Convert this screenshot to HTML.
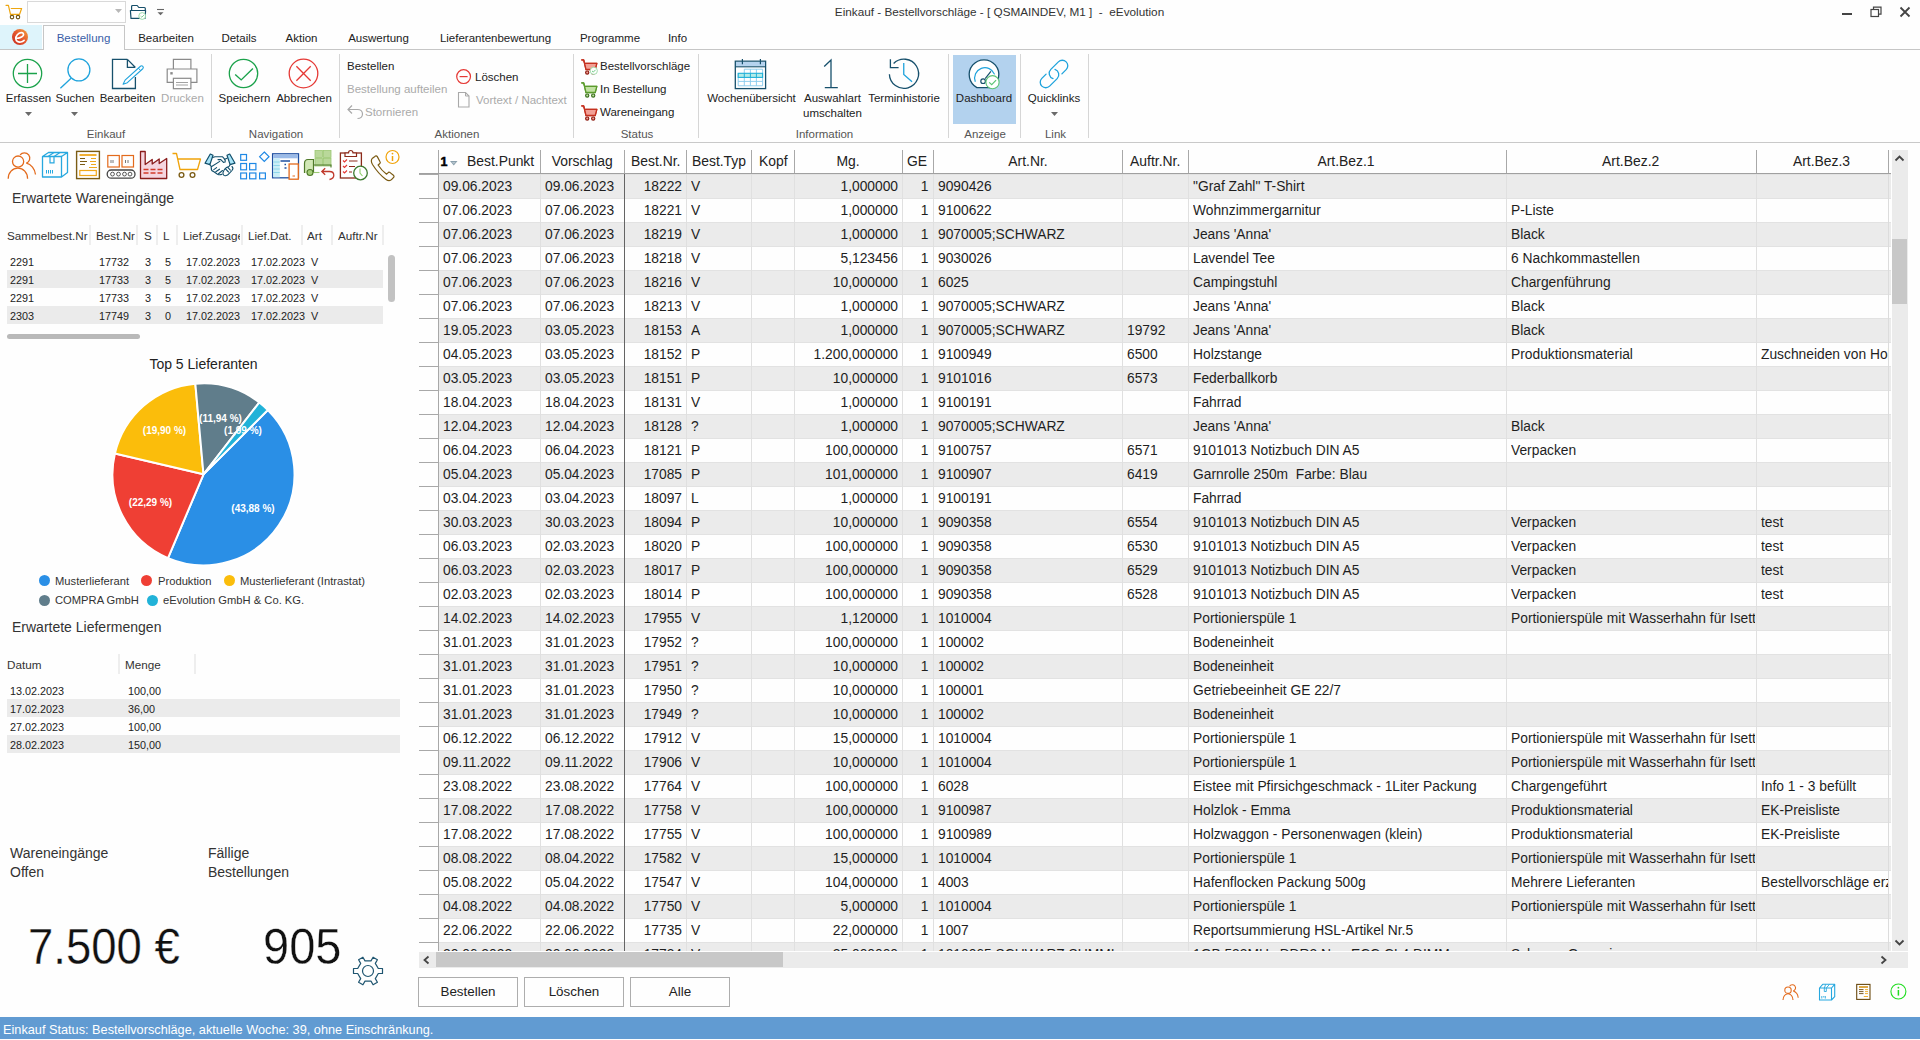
<!DOCTYPE html><html><head><meta charset="utf-8"><style>
html,body{margin:0;padding:0;width:1920px;height:1040px;overflow:hidden;background:#fefefe;font-family:"Liberation Sans", sans-serif;}
.t{position:absolute;white-space:nowrap;}
.r{position:absolute;}
</style></head><body>
<svg class="r" style="left:0px;top:0px;" width="26" height="22" viewBox="0 0 26 22"><path d="M6 5.3h2.4l2.1 9h9.1l2-5.8H11.3" fill="none" stroke="#eea60f" stroke-width="1.2" stroke-linejoin="round" stroke-linecap="round"/><circle cx="12" cy="17.1" r="1.75" fill="none" stroke="#6e5210" stroke-width="1.1"/><circle cx="18" cy="17.1" r="1.75" fill="none" stroke="#6e5210" stroke-width="1.1"/></svg>
<div class="r" style="left:27px;top:1px;width:99px;height:22px;background:#fff;border:1px solid #d9d9d9;box-sizing:border-box;"></div>
<svg class="r" style="left:115px;top:9px;" width="8" height="5" viewBox="0 0 8 5"><path d="M0 0h7l-3.5 4z" fill="#b8b8b8"/></svg>
<svg class="r" style="left:129px;top:3px;" width="20" height="20" viewBox="0 0 20 20"><path d="M2.6 7.3V3.5c0-.6.4-1 1-1h4.6l1.6 2h5.6c.5 0 .9.4.9.9v2" fill="none" stroke="#164f6a" stroke-width="1.2" stroke-linejoin="round"/><path d="M1.4 7.5h15.2l-.6 7.9H2z" fill="#fff" stroke="#164f6a" stroke-width="1.2" stroke-linejoin="round"/><circle cx="13.2" cy="13" r="3.4" fill="#fff" stroke="#8fd6a0" stroke-width="0.9"/><path d="M11.6 13.1l1.2 1.1 2.1-2.1" fill="none" stroke="#6fcb85" stroke-width="0.9"/></svg>
<svg class="r" style="left:156px;top:8px;" width="10" height="9" viewBox="0 0 10 9"><path d="M1 1.5h7" stroke="#666" stroke-width="1.1"/><path d="M1.5 4.3h6l-3 3z" fill="#666"/></svg>
<div class="t" style="top:4.0px;font-size:11.75px;line-height:16px;color:#333;left:699.5px;width:600px;text-align:center;white-space:pre;">Einkauf - Bestellvorschläge - [ QSMAINDEV, M1 ]  -  eEvolution</div>
<div class="r" style="left:1842px;top:13px;width:10px;height:2px;background:#444;"></div>
<svg class="r" style="left:1870px;top:6px;" width="12" height="12" viewBox="0 0 12 12"><rect x="1" y="3.5" width="7.5" height="7" fill="#fff" stroke="#444" stroke-width="1.2"/><path d="M3.5 3.5V1.2h7.5v7h-2.3" fill="none" stroke="#444" stroke-width="1.2"/></svg>
<svg class="r" style="left:1899px;top:6px;" width="12" height="12" viewBox="0 0 12 12"><path d="M1.5 1.5l9 9M10.5 1.5l-9 9" stroke="#444" stroke-width="1.8"/></svg>
<div class="r" style="left:0px;top:25px;width:42px;height:25px;background:#def4fb;"></div>
<svg class="r" style="left:11px;top:28px;" width="18" height="18" viewBox="0 0 18 18"><defs><linearGradient id="lg" x1="1" y1="0" x2="0" y2="1"><stop offset="0" stop-color="#f5a03a"/><stop offset="0.5" stop-color="#e4572e"/><stop offset="1" stop-color="#c62a1c"/></linearGradient></defs><circle cx="9" cy="9" r="8" fill="url(#lg)"/><path d="M4.8 10.2c2.5.3 6.5-.8 7.5-2.8.8-1.7-.5-3-2.2-2.8-2.8.3-5.5 3.3-5.3 6.2.2 2.6 2.6 3.6 5 3.2 1.3-.2 2.4-.8 3.3-1.6" fill="none" stroke="#fff" stroke-width="1.7" stroke-linecap="round"/></svg>
<div class="r" style="left:0px;top:49px;width:1920px;height:1px;background:#c6c6c6;"></div>
<div class="r" style="left:43px;top:25px;width:82px;height:25px;background:#fefefe;border:1px solid #c6c6c6;border-bottom:none;box-sizing:border-box;height:25px;"></div>
<div class="t" style="top:30.0px;font-size:11.5px;line-height:16px;color:#3a5fa8;left:-216.5px;width:600px;text-align:center;">Bestellung</div>
<div class="t" style="top:30.0px;font-size:11.5px;line-height:16px;color:#222;left:-134px;width:600px;text-align:center;">Bearbeiten</div>
<div class="t" style="top:30.0px;font-size:11.5px;line-height:16px;color:#222;left:-61px;width:600px;text-align:center;">Details</div>
<div class="t" style="top:30.0px;font-size:11.5px;line-height:16px;color:#222;left:1.5px;width:600px;text-align:center;">Aktion</div>
<div class="t" style="top:30.0px;font-size:11.5px;line-height:16px;color:#222;left:78.5px;width:600px;text-align:center;">Auswertung</div>
<div class="t" style="top:30.0px;font-size:11.5px;line-height:16px;color:#222;left:195.5px;width:600px;text-align:center;">Lieferantenbewertung</div>
<div class="t" style="top:30.0px;font-size:11.5px;line-height:16px;color:#222;left:310px;width:600px;text-align:center;">Programme</div>
<div class="t" style="top:30.0px;font-size:11.5px;line-height:16px;color:#222;left:377.5px;width:600px;text-align:center;">Info</div>
<div class="r" style="left:0px;top:142px;width:1920px;height:1px;background:#c9c9c9;"></div>
<div class="r" style="left:211px;top:54px;width:1px;height:84px;background:#d6d6d6;"></div>
<div class="r" style="left:339px;top:54px;width:1px;height:84px;background:#d6d6d6;"></div>
<div class="r" style="left:573px;top:54px;width:1px;height:84px;background:#d6d6d6;"></div>
<div class="r" style="left:698px;top:54px;width:1px;height:84px;background:#d6d6d6;"></div>
<div class="r" style="left:948px;top:54px;width:1px;height:84px;background:#d6d6d6;"></div>
<div class="r" style="left:1020px;top:54px;width:1px;height:84px;background:#d6d6d6;"></div>
<div class="r" style="left:1088px;top:54px;width:1px;height:84px;background:#d6d6d6;"></div>
<div class="t" style="top:126.0px;font-size:11.5px;line-height:16px;color:#555;left:-194px;width:600px;text-align:center;">Einkauf</div>
<div class="t" style="top:126.0px;font-size:11.5px;line-height:16px;color:#555;left:-24px;width:600px;text-align:center;">Navigation</div>
<div class="t" style="top:126.0px;font-size:11.5px;line-height:16px;color:#555;left:157px;width:600px;text-align:center;">Aktionen</div>
<div class="t" style="top:126.0px;font-size:11.5px;line-height:16px;color:#555;left:337px;width:600px;text-align:center;">Status</div>
<div class="t" style="top:126.0px;font-size:11.5px;line-height:16px;color:#555;left:524.5px;width:600px;text-align:center;">Information</div>
<div class="t" style="top:126.0px;font-size:11.5px;line-height:16px;color:#555;left:685px;width:600px;text-align:center;">Anzeige</div>
<div class="t" style="top:126.0px;font-size:11.5px;line-height:16px;color:#555;left:755.5px;width:600px;text-align:center;">Link</div>
<div class="r" style="left:953px;top:55px;width:63px;height:69px;background:#b3d2ee;"></div>
<div class="t" style="top:90.0px;font-size:11.5px;line-height:16px;color:#222;left:-271.5px;width:600px;text-align:center;">Erfassen</div>
<div class="t" style="top:90.0px;font-size:11.5px;line-height:16px;color:#222;left:-225px;width:600px;text-align:center;">Suchen</div>
<div class="t" style="top:90.0px;font-size:11.5px;line-height:16px;color:#222;left:-172.5px;width:600px;text-align:center;">Bearbeiten</div>
<div class="t" style="top:90.0px;font-size:11.5px;line-height:16px;color:#aaa;left:-117.5px;width:600px;text-align:center;">Drucken</div>
<div class="t" style="top:90.0px;font-size:11.5px;line-height:16px;color:#222;left:-55.5px;width:600px;text-align:center;">Speichern</div>
<div class="t" style="top:90.0px;font-size:11.5px;line-height:16px;color:#222;left:4px;width:600px;text-align:center;">Abbrechen</div>
<div class="t" style="top:90.0px;font-size:11.5px;line-height:16px;color:#222;left:451.5px;width:600px;text-align:center;">Wochenübersicht</div>
<div class="t" style="top:90.0px;font-size:11.5px;line-height:16px;color:#222;left:532.5px;width:600px;text-align:center;">Auswahlart</div>
<div class="t" style="top:90.0px;font-size:11.5px;line-height:16px;color:#222;left:604px;width:600px;text-align:center;">Terminhistorie</div>
<div class="t" style="top:90.0px;font-size:11.5px;line-height:16px;color:#222;left:684px;width:600px;text-align:center;">Dashboard</div>
<div class="t" style="top:90.0px;font-size:11.5px;line-height:16px;color:#222;left:754px;width:600px;text-align:center;">Quicklinks</div>
<div class="t" style="top:105.0px;font-size:11.5px;line-height:16px;color:#222;left:532.5px;width:600px;text-align:center;">umschalten</div>
<svg class="r" style="left:24.5px;top:111.5px;" width="7" height="4" viewBox="0 0 7 4"><path d="M0 0h7l-3.5 4z" fill="#6a6a6a"/></svg>
<svg class="r" style="left:70.5px;top:111.5px;" width="7" height="4" viewBox="0 0 7 4"><path d="M0 0h7l-3.5 4z" fill="#6a6a6a"/></svg>
<svg class="r" style="left:1050.5px;top:111.5px;" width="7" height="4" viewBox="0 0 7 4"><path d="M0 0h7l-3.5 4z" fill="#6a6a6a"/></svg>
<div class="t" style="top:58.0px;font-size:11.5px;line-height:16px;color:#222;left:347px;">Bestellen</div>
<div class="t" style="top:81.0px;font-size:11.5px;line-height:16px;color:#aaa;left:347px;">Bestellung aufteilen</div>
<div class="t" style="top:104.0px;font-size:11.5px;line-height:16px;color:#aaa;left:365px;">Stornieren</div>
<div class="t" style="top:69.0px;font-size:11.5px;line-height:16px;color:#222;left:475px;">Löschen</div>
<div class="t" style="top:92.0px;font-size:11.5px;line-height:16px;color:#aaa;left:476px;">Vortext / Nachtext</div>
<div class="t" style="top:58.0px;font-size:11.5px;line-height:16px;color:#222;left:600px;">Bestellvorschläge</div>
<div class="t" style="top:81.0px;font-size:11.5px;line-height:16px;color:#222;left:600px;">In Bestellung</div>
<div class="t" style="top:104.0px;font-size:11.5px;line-height:16px;color:#222;left:600px;">Wareneingang</div>
<svg class="r" style="left:10px;top:56px;" width="36" height="36" viewBox="0 0 36 36"><circle cx="17.5" cy="17.5" r="14.2" fill="none" stroke="#1ba24b" stroke-width="1.3"/><path d="M8 17.5h19M17.5 8v19" stroke="#1ba24b" stroke-width="1.3"/></svg>
<svg class="r" style="left:56px;top:56px;" width="40" height="36" viewBox="0 0 40 36"><circle cx="22.9" cy="13.9" r="11" fill="none" stroke="#1fa3dc" stroke-width="1.3"/><path d="M15.1 22.3L4.4 32.3" stroke="#1fa3dc" stroke-width="1.3"/></svg>
<svg class="r" style="left:108px;top:56px;" width="40" height="36" viewBox="0 0 40 36"><path d="M19.4 3.4H4.5V32.5H27.4V21" fill="none" stroke="#17506c" stroke-width="1.3" stroke-linejoin="miter"/><path d="M19.4 3.4L27.2 11.3H19.4Z" fill="none" stroke="#17506c" stroke-width="1.3" stroke-linejoin="miter" stroke-miterlimit="1.5"/><path d="M15.10 28.20L19.36 26.65L34.74 12.76A1.7 1.7 0 0 0 32.46 10.24L17.08 24.12Z" fill="#fff" stroke="#1fa3dc" stroke-width="1.1" stroke-linejoin="round"/><path d="M32.66 14.64L30.38 12.11" stroke="#1fa3dc" stroke-width="1"/></svg>
<svg class="r" style="left:164px;top:56px;" width="36" height="36" viewBox="0 0 36 36"><path d="M9.4 13V3.4h17.5V13" fill="none" stroke="#8a8a8a" stroke-width="1.2"/><path d="M9.4 26.4H3.2V13h29.7v13.4h-6" fill="none" stroke="#8a8a8a" stroke-width="1.2"/><rect x="9.4" y="22.3" width="17.5" height="10.4" fill="#fff" stroke="#8a8a8a" stroke-width="1.2"/><path d="M12 26.5h12M12 29h12" stroke="#8a8a8a" stroke-width="0.8"/><rect x="6.3" y="16.1" width="2.4" height="2.4" fill="#8a8a8a"/></svg>
<svg class="r" style="left:226px;top:56px;" width="36" height="36" viewBox="0 0 36 36"><circle cx="17.5" cy="17.5" r="14.2" fill="none" stroke="#1ba24b" stroke-width="1.3"/><path d="M9.2 18.4l6 5.5 11.7-11.5" fill="none" stroke="#1ba24b" stroke-width="1.4"/></svg>
<svg class="r" style="left:286px;top:56px;" width="36" height="36" viewBox="0 0 36 36"><circle cx="17.5" cy="17.5" r="14.3" fill="none" stroke="#e53935" stroke-width="1.3"/><path d="M10.4 10.2l14.3 14.5M24.7 10.2L10.4 24.7" stroke="#e53935" stroke-width="1.3"/></svg>
<svg class="r" style="left:345px;top:102px;" width="20" height="18" viewBox="0 0 20 18"><path d="M3 7.5h9.5c3 0 5 2 5 4.5s-2 4.5-5 4.5" fill="none" stroke="#a9a9a9" stroke-width="1.2"/><path d="M7 3.5L3 7.5l4 4" fill="none" stroke="#a9a9a9" stroke-width="1.2"/></svg>
<svg class="r" style="left:455px;top:68px;" width="18" height="18" viewBox="0 0 18 18"><circle cx="8.6" cy="8.6" r="6.9" fill="none" stroke="#e53935" stroke-width="1.2"/><path d="M4.6 8.6h8" stroke="#e53935" stroke-width="1.2"/></svg>
<svg class="r" style="left:457px;top:91px;" width="14" height="18" viewBox="0 0 14 18"><path d="M1.5 1.5h7l3.5 3.5v11H1.5z" fill="none" stroke="#a9a9a9" stroke-width="1.1"/><path d="M8.5 1.5V5h3.5" fill="none" stroke="#a9a9a9" stroke-width="1"/></svg>
<svg class="r" style="left:581px;top:58.5px;" width="18" height="16" viewBox="0 0 18 16"><path d="M0.3 0.9h2.4l2.3 9.6h9.2l1.6-6.2H3.8" fill="#f2a096" stroke="#c4301f" stroke-width="1.3" stroke-linejoin="round"/><path d="M3.8 4.3h11.9l-1.6 6.2H5.2z" fill="#f2a096"/><path d="M0.3 0.9h2.4l2.3 9.6h9.2l1.6-6.2H3.8" fill="none" stroke="#c4301f" stroke-width="1.3" stroke-linejoin="round"/><circle cx="6.2" cy="13.6" r="1.6" fill="#f2a096" stroke="#8e2016" stroke-width="1.2"/><circle cx="12.2" cy="13.6" r="1.6" fill="#f2a096" stroke="#8e2016" stroke-width="1.2"/><circle cx="12.8" cy="11.8" r="3.6" fill="#fff" stroke="#9ad9a5" stroke-width="0.9"/><path d="M11 11.9l1.3 1.2 2.3-2.3" fill="none" stroke="#5cc476" stroke-width="0.9"/></svg>
<svg class="r" style="left:581px;top:81.5px;" width="18" height="16" viewBox="0 0 18 16"><path d="M0.3 0.9h2.4l2.3 9.6h9.2l1.6-6.2H3.8" fill="#c2e2a3" stroke="#5b9b2d" stroke-width="1.3" stroke-linejoin="round"/><path d="M3.8 4.3h11.9l-1.6 6.2H5.2z" fill="#c2e2a3"/><path d="M0.3 0.9h2.4l2.3 9.6h9.2l1.6-6.2H3.8" fill="none" stroke="#5b9b2d" stroke-width="1.3" stroke-linejoin="round"/><circle cx="6.2" cy="13.6" r="1.6" fill="#c2e2a3" stroke="#3d7220" stroke-width="1.2"/><circle cx="12.2" cy="13.6" r="1.6" fill="#c2e2a3" stroke="#3d7220" stroke-width="1.2"/></svg>
<svg class="r" style="left:581px;top:104.5px;" width="18" height="16" viewBox="0 0 18 16"><path d="M0.3 0.9h2.4l2.3 9.6h9.2l1.6-6.2H3.8" fill="#f2a096" stroke="#c4301f" stroke-width="1.3" stroke-linejoin="round"/><path d="M3.8 4.3h11.9l-1.6 6.2H5.2z" fill="#f2a096"/><path d="M0.3 0.9h2.4l2.3 9.6h9.2l1.6-6.2H3.8" fill="none" stroke="#c4301f" stroke-width="1.3" stroke-linejoin="round"/><circle cx="6.2" cy="13.6" r="1.6" fill="#f2a096" stroke="#8e2016" stroke-width="1.2"/><circle cx="12.2" cy="13.6" r="1.6" fill="#f2a096" stroke="#8e2016" stroke-width="1.2"/></svg>
<svg class="r" style="left:734px;top:58px;" width="33" height="32" viewBox="0 0 33 32"><rect x="1.3" y="3.2" width="30.3" height="27.4" fill="#fff" stroke="#17506c" stroke-width="1.3"/><rect x="2" y="3.9" width="28.9" height="4.5" fill="#b5d3ee"/><path d="M1.3 8.8h30.3" stroke="#17506c" stroke-width="1.1"/><path d="M8.4 1v5.2M26.4 1v5.2" stroke="#17506c" stroke-width="1.2"/><path d="M10.3 11.2h18.3v16.6H4.2V15.3M4.2 23.4h24.4M10.3 11.2v16.6M16.4 11.2v16.6M22.4 11.2v16.6" fill="none" stroke="#86c9ec" stroke-width="0.9"/><rect x="4.2" y="15.3" width="24.4" height="4.1" fill="#b2ebe8" stroke="#1fb0d8" stroke-width="1.1"/><path d="M10.3 15.3v4.1M16.4 15.3v4.1M22.4 15.3v4.1" stroke="#1fb0d8" stroke-width="1"/></svg>
<svg class="r" style="left:820px;top:58px;" width="20" height="32" viewBox="0 0 20 32"><path d="M4.2 8.5L11 2v28M4.8 29.6h13" fill="none" stroke="#17506c" stroke-width="1.3"/></svg>
<svg class="r" style="left:886px;top:56px;" width="36" height="36" viewBox="0 0 36 36"><path d="M3.4 18.2A14.6 14.6 0 1 0 7.6 7.5" fill="none" stroke="#17506c" stroke-width="1.3"/><path d="M4.4 3.3v8.3h8.2" fill="none" stroke="#17506c" stroke-width="1.3"/><path d="M17.75 6.9v11.5l8.3 7.3" fill="none" stroke="#1fa3dc" stroke-width="1.3"/></svg>
<svg class="r" style="left:966px;top:56px;" width="36" height="36" viewBox="0 0 36 36"><path d="M10.9 31.6A14.8 14.8 0 1 1 25.1 31.6z" fill="#fff" stroke="#17506c" stroke-width="1.3"/><path d="M9.3 25.7A10 10 0 1 1 28.6 18.4" fill="none" stroke="#1fa3dc" stroke-width="1.2"/><path d="M19.2 22.6l5.7-7.3" stroke="#17506c" stroke-width="1.2"/><circle cx="17.1" cy="25.2" r="2.3" fill="#fff" stroke="#17506c" stroke-width="1.2"/><circle cx="26.5" cy="26.2" r="6.6" fill="#fff" stroke="#5cc476" stroke-width="1.1"/><path d="M23.2 26.4l2.5 2.2 4.4-4.4" fill="none" stroke="#5cc476" stroke-width="1.2"/></svg>
<svg class="r" style="left:1036px;top:55.7px;" width="36" height="36" viewBox="0 0 36 36"><g transform="rotate(-45 18 18)" fill="none" stroke="#1fa3dc" stroke-width="1.3" stroke-linecap="round"><path d="M23.7 23.5H29.7A5.5 5.5 0 0 0 29.7 12.5H19A5.5 5.5 0 0 0 14.1 20.5"/><path d="M12.3 12.5H6.3A5.5 5.5 0 0 0 6.3 23.5H17A5.5 5.5 0 0 0 21.9 15.5"/></g></svg>
<svg class="r" style="left:6px;top:149px;" width="32" height="32" viewBox="0 0 32 32"><circle cx="12.1" cy="12.6" r="5.6" fill="none" stroke="#e36a1c" stroke-width="1.3"/><path d="M2.2 29.8c0-6.2 4.3-10.6 9.7-10.6s9.7 4.4 9.7 10.6" fill="none" stroke="#e36a1c" stroke-width="1.3"/><path d="M14.1 5.9A5.4 5.4 0 1 1 20.4 14.2" fill="none" stroke="#e36a1c" stroke-width="1.3"/><path d="M20.4 14.2c4.6 1 8.6 5.5 9.1 11.3" fill="none" stroke="#e36a1c" stroke-width="1.3"/></svg>
<svg class="r" style="left:40px;top:149px;" width="32" height="32" viewBox="0 0 32 32"><path d="M2.5 7.5h19v20.5h-19z M2.5 7.5l6-4h19l-6 4 M21.5 28l6-4.5V3.5" fill="none" stroke="#27a8df" stroke-width="1.3" stroke-linejoin="round"/><path d="M10 7.5v6.3h4v-6.3l6-4M14 3.5l-6 4" fill="none" stroke="#27a8df" stroke-width="1.2"/><path d="M6.5 21v3.5M8.5 21v3.5M10.5 21v3.5M12.5 21v3.5" stroke="#27a8df" stroke-width="1"/></svg>
<svg class="r" style="left:74px;top:149px;" width="28" height="32" viewBox="0 0 28 32"><rect x="2.6" y="2.4" width="22.8" height="27.2" fill="none" stroke="#7b5c14" stroke-width="1.4"/><path d="M5.5 6h17" stroke="#f0a81c" stroke-width="1.8"/><path d="M6 9.5h5M6 12.5h7M6 15.5h5" stroke="#7b5c14" stroke-width="1"/><path d="M17 9.5h5M16 12.5h6M17 15.5h5M15 18.5h8" stroke="#f0a81c" stroke-width="1"/><rect x="5.8" y="21.5" width="16.5" height="5" fill="none" stroke="#f0a81c" stroke-width="1.2"/></svg>
<svg class="r" style="left:105px;top:149px;" width="32" height="32" viewBox="0 0 32 32"><rect x="2.8" y="6.5" width="11.5" height="11.5" fill="none" stroke="#e36a1c" stroke-width="1.2"/><rect x="17" y="6.5" width="11.5" height="11.5" fill="none" stroke="#e36a1c" stroke-width="1.2"/><path d="M6 14v-3M8 14v-3M20.5 14v-3M23 14v-3" stroke="#555" stroke-width="0.8"/><rect x="2.2" y="21" width="27.8" height="8.2" rx="4" fill="none" stroke="#444" stroke-width="1.3"/><circle cx="7.5" cy="25.1" r="1.9" fill="none" stroke="#444" stroke-width="0.9"/><circle cx="13.5" cy="25.1" r="1.9" fill="none" stroke="#444" stroke-width="0.9"/><circle cx="19.5" cy="25.1" r="1.9" fill="none" stroke="#444" stroke-width="0.9"/><circle cx="25" cy="25.1" r="1.9" fill="none" stroke="#444" stroke-width="0.9"/></svg>
<svg class="r" style="left:138px;top:149px;" width="32" height="32" viewBox="0 0 32 32"><path d="M2.5 29.5V2.5h4.7v13l7-5v4.5l7-5v4.5l7.5-5v20z" fill="#f5d5df" stroke="#8a1c1c" stroke-width="1.3" stroke-linejoin="round"/><path d="M5.5 20.5h5M12.5 20.5h5M19.5 20.5h5M5.5 24h5M12.5 24h5M19.5 24h5" stroke="#d23a2a" stroke-width="1.6"/></svg>
<svg class="r" style="left:171px;top:149px;" width="32" height="32" viewBox="0 0 32 32"><path d="M1.5 4.5h4l3.5 16h17.5l3-10.5H7" fill="none" stroke="#f0a30a" stroke-width="1.3" stroke-linejoin="round"/><circle cx="10.5" cy="26" r="2.4" fill="none" stroke="#7a5a12" stroke-width="1.3"/><circle cx="21.5" cy="26" r="2.4" fill="none" stroke="#7a5a12" stroke-width="1.3"/></svg>
<svg class="r" style="left:203px;top:149px;" width="34" height="32" viewBox="0 0 34 32"><path d="M7.3 5l2.7 1.3-3.1 9.3-4.9-1.4z M26.7 5l-2.7 1.3 3.1 9.3 4.9-1.4z" fill="#a8e4f8" stroke="#124f6b" stroke-width="1.2" stroke-linejoin="round"/><g fill="none" stroke="#124f6b" stroke-width="1.1" stroke-linecap="round" stroke-linejoin="round"><path d="M9.7 8.6L12 7.8h7.6l1.4 1.6 1.3 2.2M21.8 10.3l2.2-1"/><path d="M15 10.6h2.8l2.7 2.8 2-.6"/><path d="M16.8 12.4L7.9 18M6.4 15.2L8 17"/><path d="M8.3 18.5c-.3 2 .7 3.5 2.2 4l4 2.7c1.5.8 3 .8 4.5.1"/><path d="M10.8 20.6l2.8-2M12.8 22.8l3.7-2.6M15.5 24.7l4-3.2"/><path d="M27.2 15.5L26 17.5l-2.5 1c-1.5 1-3 3-3.5 5-.3 2 1 3.5 2.5 3.3 1.5-.2 3-1.3 4-2.6l2.5-2.7c1.3-1.5 1-3 0-4"/><path d="M22.5 19.8l3 3.2M24.8 18.4l2.5 2.8"/></g></svg>
<svg class="r" style="left:238px;top:149px;" width="32" height="32" viewBox="0 0 32 32"><g fill="none" stroke="#1e88e5" stroke-width="1.2"><rect x="2.7" y="5.5" width="5.8" height="5.8"/><rect x="2.7" y="14.5" width="5.8" height="6.3"/><rect x="11.6" y="14.5" width="6.3" height="6.3"/><rect x="2.7" y="24" width="5.8" height="5.8"/><rect x="11.6" y="24" width="6.3" height="5.8"/><rect x="21.6" y="24" width="5.8" height="5.8"/><path d="M26.3 3l4.7 4.7-4.7 4.7-4.7-4.7z"/></g></svg>
<svg class="r" style="left:271px;top:149px;" width="32" height="32" viewBox="0 0 32 32"><rect x="1.6" y="4.8" width="25.9" height="24" fill="#fff" stroke="#1f4fa0" stroke-width="1.3"/><rect x="2.3" y="5.5" width="24.5" height="3.8" fill="#9bbbe8"/><rect x="2.3" y="9.3" width="6.5" height="19" fill="#c9eef7"/><path d="M2.3 13h6.5M2.3 16.5h6.5M2.3 20h6.5M2.3 23.5h6.5" stroke="#7fcfe5" stroke-width="0.8"/><path d="M9.5 12h9.5M13.5 15.5h1.5M13.5 19h2" stroke="#1f4fa0" stroke-width="1.3"/><rect x="18.1" y="15" width="9.2" height="15.2" fill="#fff" stroke="#e36a1c" stroke-width="1.3"/><path d="M21.5 27h2.5" stroke="#e36a1c" stroke-width="1"/></svg>
<svg class="r" style="left:302px;top:149px;" width="34" height="32" viewBox="0 0 34 32"><rect x="13" y="1.5" width="7.5" height="7" fill="#b9d89a" stroke="#9cc873" stroke-width="0.8"/><rect x="21.5" y="1.5" width="7.5" height="7" fill="#b9d89a" stroke="#9cc873" stroke-width="0.8"/><rect x="13" y="9.5" width="7.5" height="7.5" fill="#b9d89a" stroke="#9cc873" stroke-width="0.8"/><rect x="21.5" y="9.5" width="7.5" height="7.5" fill="#b9d89a" stroke="#9cc873" stroke-width="0.8"/><path d="M2.5 24V14.5c0-2.5 1.5-4 3.5-4h5.5v13.5" fill="#d2e8b6" stroke="#4f7a2a" stroke-width="1.2"/><path d="M11.5 16h17.5v2.5" fill="none" stroke="#4f7a2a" stroke-width="1.1"/><circle cx="8" cy="23.5" r="3" fill="#a6cf7a" stroke="#4f7a2a" stroke-width="1.1"/><path d="M11.5 23.5h6" stroke="#9cc873" stroke-width="1.1"/><path d="M20 22.5h7.5c2.8 0 4.3 1.8 4.3 3.8s-1.5 3.7-4.3 4.2M23.2 19.2L19.8 22.5l3.4 3.3" fill="none" stroke="#c0392b" stroke-width="1.3"/></svg>
<svg class="r" style="left:338px;top:149px;" width="32" height="32" viewBox="0 0 32 32"><rect x="2.4" y="4" width="21" height="25" fill="none" stroke="#8b2a1a" stroke-width="1.3"/><path d="M7 4v3.5h11.5V4h-3.5c0-1.5-1-2.5-2.2-2.5S10.5 2.5 10.5 4z" fill="#fff" stroke="#8b2a1a" stroke-width="1.2"/><path d="M5 11.5l1.5 1.5 2.5-2.5M5 17l1.5 1.5 2.5-2.5M5 22.5l1.5 1.5 2.5-2.5" fill="none" stroke="#e53935" stroke-width="1.2"/><path d="M11 12h8.5M11 17.5h6M11 23h3" stroke="#8b2a1a" stroke-width="1.2"/><circle cx="22.5" cy="24" r="6.8" fill="#fff" stroke="#3d7a2e" stroke-width="1.3"/><path d="M22 19.5v4.5l2.5 3" fill="none" stroke="#8fcf6a" stroke-width="1.1"/></svg>
<svg class="r" style="left:369px;top:148px;" width="34" height="34" viewBox="0 0 34 34"><path d="M3.5 10.2c-1.5 1.6-1.5 3.8 0 6.3 3.8 6 8 11 13.5 15 2.3 1.6 4.5 1.4 6-.3l1.6-1.8c.6-.7.5-1.6-.2-2.2l-3.3-2.6c-.7-.5-1.6-.5-2.2.2l-1.3 1.4c-3.2-2.3-6.2-5.6-8.5-9.2l1.5-1.3c.7-.6.8-1.5.3-2.2L8.3 8.6c-.6-.8-1.7-.9-2.4-.2z" fill="none" stroke="#7a5a12" stroke-width="1.2" stroke-linejoin="round"/><circle cx="23.5" cy="9" r="6.5" fill="#fff" stroke="#f0a30a" stroke-width="1.2"/><path d="M23.5 8v5" stroke="#f0a30a" stroke-width="1.5"/><circle cx="23.5" cy="5.6" r="0.9" fill="#f0a30a"/></svg>
<div class="t" style="top:188.9px;font-size:14px;line-height:19px;color:#333;left:12px;">Erwartete Wareneingänge</div>
<div class="t" style="top:227.8px;font-size:11.7px;line-height:16px;color:#333;width:81px;overflow:hidden;left:7px;">Sammelbest.Nr</div>
<div class="t" style="top:227.8px;font-size:11.7px;line-height:16px;color:#333;width:39px;overflow:hidden;left:96px;">Best.Nr</div>
<div class="t" style="top:227.8px;font-size:11.7px;line-height:16px;color:#333;width:11px;overflow:hidden;left:144px;">S</div>
<div class="t" style="top:227.8px;font-size:11.7px;line-height:16px;color:#333;width:12px;overflow:hidden;left:163px;">L</div>
<div class="t" style="top:227.8px;font-size:11.7px;line-height:16px;color:#333;width:57px;overflow:hidden;left:183px;">Lief.Zusage</div>
<div class="t" style="top:227.8px;font-size:11.7px;line-height:16px;color:#333;width:52px;overflow:hidden;left:248px;">Lief.Dat.</div>
<div class="t" style="top:227.8px;font-size:11.7px;line-height:16px;color:#333;width:23px;overflow:hidden;left:307px;">Art</div>
<div class="t" style="top:227.8px;font-size:11.7px;line-height:16px;color:#333;width:43px;overflow:hidden;left:338px;">Auftr.Nr</div>
<div class="r" style="left:89px;top:225px;width:2px;height:20px;background:#eeeeee;"></div>
<div class="r" style="left:136px;top:225px;width:2px;height:20px;background:#eeeeee;"></div>
<div class="r" style="left:156px;top:225px;width:2px;height:20px;background:#eeeeee;"></div>
<div class="r" style="left:176px;top:225px;width:2px;height:20px;background:#eeeeee;"></div>
<div class="r" style="left:241px;top:225px;width:2px;height:20px;background:#eeeeee;"></div>
<div class="r" style="left:301px;top:225px;width:2px;height:20px;background:#eeeeee;"></div>
<div class="r" style="left:331px;top:225px;width:2px;height:20px;background:#eeeeee;"></div>
<div class="r" style="left:382px;top:225px;width:2px;height:20px;background:#eeeeee;"></div>
<div class="t" style="top:254.8px;font-size:10.8px;line-height:15px;color:#222;left:10px;">2291</div>
<div class="t" style="top:254.8px;font-size:10.8px;line-height:15px;color:#222;right:1791px;text-align:right;">17732</div>
<div class="t" style="top:254.8px;font-size:10.8px;line-height:15px;color:#222;right:1769px;text-align:right;">3</div>
<div class="t" style="top:254.8px;font-size:10.8px;line-height:15px;color:#222;right:1749px;text-align:right;">5</div>
<div class="t" style="top:254.8px;font-size:10.8px;line-height:15px;color:#222;left:186px;">17.02.2023</div>
<div class="t" style="top:254.8px;font-size:10.8px;line-height:15px;color:#222;left:251px;">17.02.2023</div>
<div class="t" style="top:254.8px;font-size:10.8px;line-height:15px;color:#222;left:311px;">V</div>
<div class="r" style="left:7px;top:270px;width:376px;height:18px;background:#ebebeb;"></div>
<div class="t" style="top:272.8px;font-size:10.8px;line-height:15px;color:#222;left:10px;">2291</div>
<div class="t" style="top:272.8px;font-size:10.8px;line-height:15px;color:#222;right:1791px;text-align:right;">17733</div>
<div class="t" style="top:272.8px;font-size:10.8px;line-height:15px;color:#222;right:1769px;text-align:right;">3</div>
<div class="t" style="top:272.8px;font-size:10.8px;line-height:15px;color:#222;right:1749px;text-align:right;">5</div>
<div class="t" style="top:272.8px;font-size:10.8px;line-height:15px;color:#222;left:186px;">17.02.2023</div>
<div class="t" style="top:272.8px;font-size:10.8px;line-height:15px;color:#222;left:251px;">17.02.2023</div>
<div class="t" style="top:272.8px;font-size:10.8px;line-height:15px;color:#222;left:311px;">V</div>
<div class="t" style="top:290.8px;font-size:10.8px;line-height:15px;color:#222;left:10px;">2291</div>
<div class="t" style="top:290.8px;font-size:10.8px;line-height:15px;color:#222;right:1791px;text-align:right;">17733</div>
<div class="t" style="top:290.8px;font-size:10.8px;line-height:15px;color:#222;right:1769px;text-align:right;">3</div>
<div class="t" style="top:290.8px;font-size:10.8px;line-height:15px;color:#222;right:1749px;text-align:right;">5</div>
<div class="t" style="top:290.8px;font-size:10.8px;line-height:15px;color:#222;left:186px;">17.02.2023</div>
<div class="t" style="top:290.8px;font-size:10.8px;line-height:15px;color:#222;left:251px;">17.02.2023</div>
<div class="t" style="top:290.8px;font-size:10.8px;line-height:15px;color:#222;left:311px;">V</div>
<div class="r" style="left:7px;top:306px;width:376px;height:18px;background:#ebebeb;"></div>
<div class="t" style="top:308.8px;font-size:10.8px;line-height:15px;color:#222;left:10px;">2303</div>
<div class="t" style="top:308.8px;font-size:10.8px;line-height:15px;color:#222;right:1791px;text-align:right;">17749</div>
<div class="t" style="top:308.8px;font-size:10.8px;line-height:15px;color:#222;right:1769px;text-align:right;">3</div>
<div class="t" style="top:308.8px;font-size:10.8px;line-height:15px;color:#222;right:1749px;text-align:right;">0</div>
<div class="t" style="top:308.8px;font-size:10.8px;line-height:15px;color:#222;left:186px;">17.02.2023</div>
<div class="t" style="top:308.8px;font-size:10.8px;line-height:15px;color:#222;left:251px;">17.02.2023</div>
<div class="t" style="top:308.8px;font-size:10.8px;line-height:15px;color:#222;left:311px;">V</div>
<div class="r" style="left:388px;top:255px;width:7px;height:47px;background:#c2c2c2;border-radius:4px;"></div>
<div class="r" style="left:7px;top:334px;width:133px;height:5px;background:#b9b9b9;border-radius:3px;"></div>
<div class="t" style="top:354.8px;font-size:14px;line-height:19px;color:#222;left:-96.5px;width:600px;text-align:center;">Top 5 Lieferanten</div>
<svg class="r" style="left:0;top:0" width="410" height="620" viewBox="0 0 410 620"><path d="M203.5,474.3 L267.85,409.95 A91,91 0 0 1 167.99,558.09 Z" fill="#2a8fe6" stroke="#fff" stroke-width="2" stroke-linejoin="round"/><path d="M203.5,474.3 L167.99,558.09 A91,91 0 0 1 114.91,453.50 Z" fill="#ef3f34" stroke="#fff" stroke-width="2" stroke-linejoin="round"/><path d="M203.5,474.3 L114.91,453.50 A91,91 0 0 1 195.33,383.67 Z" fill="#fbbd0b" stroke="#fff" stroke-width="2" stroke-linejoin="round"/><path d="M203.5,474.3 L195.33,383.67 A91,91 0 0 1 259.32,402.43 Z" fill="#607d8b" stroke="#fff" stroke-width="2" stroke-linejoin="round"/><path d="M203.5,474.3 L259.32,402.43 A91,91 0 0 1 267.85,409.95 Z" fill="#21b2d8" stroke="#fff" stroke-width="2" stroke-linejoin="round"/></svg>
<div class="t" style="top:501.5px;font-size:10px;line-height:14px;color:#fff;font-weight:bold;left:-47px;width:600px;text-align:center;">(43,88 %)</div>
<div class="t" style="top:495.5px;font-size:10px;line-height:14px;color:#fff;font-weight:bold;left:-149.5px;width:600px;text-align:center;">(22,29 %)</div>
<div class="t" style="top:423.5px;font-size:10px;line-height:14px;color:#fff;font-weight:bold;left:-135.5px;width:600px;text-align:center;">(19,90 %)</div>
<div class="t" style="top:411.5px;font-size:10px;line-height:14px;color:#fff;font-weight:bold;left:-79.5px;width:600px;text-align:center;">(11,94 %)</div>
<div class="t" style="top:424.0px;font-size:10px;line-height:14px;color:#fff;font-weight:bold;left:-57px;width:600px;text-align:center;">(1,99 %)</div>
<div class="r" style="left:38.5px;top:575.0px;width:11px;height:11px;background:#2a8fe6;border-radius:50%;"></div>
<div class="r" style="left:141.0px;top:575.0px;width:11px;height:11px;background:#ef3f34;border-radius:50%;"></div>
<div class="r" style="left:223.5px;top:575.0px;width:11px;height:11px;background:#fbbd0b;border-radius:50%;"></div>
<div class="r" style="left:38.5px;top:594.5px;width:11px;height:11px;background:#607d8b;border-radius:50%;"></div>
<div class="r" style="left:146.5px;top:594.5px;width:11px;height:11px;background:#21b2d8;border-radius:50%;"></div>
<div class="t" style="top:573.5px;font-size:11.2px;line-height:15px;color:#333;left:55px;">Musterlieferant</div>
<div class="t" style="top:573.5px;font-size:11.2px;line-height:15px;color:#333;left:158px;">Produktion</div>
<div class="t" style="top:573.5px;font-size:11.2px;line-height:15px;color:#333;left:240px;">Musterlieferant (Intrastat)</div>
<div class="t" style="top:592.5px;font-size:11.2px;line-height:15px;color:#333;left:55px;">COMPRA GmbH</div>
<div class="t" style="top:592.5px;font-size:11.2px;line-height:15px;color:#333;left:163px;">eEvolution GmbH &amp; Co. KG.</div>
<div class="t" style="top:618.0px;font-size:14px;line-height:19px;color:#333;left:12px;">Erwartete Liefermengen</div>
<div class="t" style="top:656.7px;font-size:11.7px;line-height:16px;color:#333;left:7px;">Datum</div>
<div class="t" style="top:656.7px;font-size:11.7px;line-height:16px;color:#333;left:125px;">Menge</div>
<div class="r" style="left:118px;top:654px;width:2px;height:20px;background:#eeeeee;"></div>
<div class="r" style="left:194px;top:654px;width:2px;height:20px;background:#eeeeee;"></div>
<div class="t" style="top:683.8px;font-size:10.8px;line-height:15px;color:#222;left:10px;">13.02.2023</div>
<div class="t" style="top:683.8px;font-size:10.8px;line-height:15px;color:#222;left:128px;">100,00</div>
<div class="r" style="left:7px;top:699px;width:393px;height:18px;background:#ebebeb;"></div>
<div class="t" style="top:701.8px;font-size:10.8px;line-height:15px;color:#222;left:10px;">17.02.2023</div>
<div class="t" style="top:701.8px;font-size:10.8px;line-height:15px;color:#222;left:128px;">36,00</div>
<div class="t" style="top:719.8px;font-size:10.8px;line-height:15px;color:#222;left:10px;">27.02.2023</div>
<div class="t" style="top:719.8px;font-size:10.8px;line-height:15px;color:#222;left:128px;">100,00</div>
<div class="r" style="left:7px;top:735px;width:393px;height:18px;background:#ebebeb;"></div>
<div class="t" style="top:737.8px;font-size:10.8px;line-height:15px;color:#222;left:10px;">28.02.2023</div>
<div class="t" style="top:737.8px;font-size:10.8px;line-height:15px;color:#222;left:128px;">150,00</div>
<div class="t" style="top:844.0px;font-size:14px;line-height:19px;color:#333;left:10px;">Wareneingänge</div>
<div class="t" style="top:863.0px;font-size:14px;line-height:19px;color:#333;left:10px;">Offen</div>
<div class="t" style="top:844.0px;font-size:14px;line-height:19px;color:#333;left:208px;">Fällige</div>
<div class="t" style="top:863.0px;font-size:14px;line-height:19px;color:#333;left:208px;">Bestellungen</div>
<div class="t" style="top:911.5px;font-size:50px;line-height:70px;color:#111;left:27.5px;-webkit-text-stroke:0.35px #fefefe;transform:scaleX(0.91);transform-origin:0 0;">7.500 €</div>
<div class="t" style="top:911.5px;font-size:50px;line-height:70px;color:#111;left:262.5px;-webkit-text-stroke:0.35px #fefefe;transform:scaleX(0.94);transform-origin:0 0;">905</div>
<svg class="r" style="left:352px;top:954.5px;" width="32" height="32" viewBox="0 0 32 32"><path d="M26.30 13.50 L30.50 13.50 L30.50 18.50 L26.30 18.50 L23.32 23.67 L25.42 27.31 L21.08 29.81 L18.99 26.17 L13.01 26.17 L10.92 29.81 L6.58 27.31 L8.68 23.67 L5.70 18.50 L1.50 18.50 L1.50 13.50 L5.70 13.50 L8.68 8.33 L6.58 4.69 L10.92 2.19 L13.01 5.83 L18.99 5.83 L21.08 2.19 L25.42 4.69 L23.32 8.33Z" fill="none" stroke="#1f5570" stroke-width="1.2" stroke-linejoin="round"/><circle cx="16" cy="16" r="5.5" fill="none" stroke="#1f5570" stroke-width="1.2"/></svg>
<div class="r" style="left:438px;top:174px;width:1453px;height:777px;overflow:hidden;">
<div class="r" style="left:0;top:0px;width:1453px;height:25px;background:#ebebeb;border-top:1px solid #e2e2e2;border-bottom:1px solid #e2e2e2;box-sizing:border-box"></div>
<div class="r" style="left:0;top:48px;width:1453px;height:25px;background:#ebebeb;border-top:1px solid #e2e2e2;border-bottom:1px solid #e2e2e2;box-sizing:border-box"></div>
<div class="r" style="left:0;top:96px;width:1453px;height:25px;background:#ebebeb;border-top:1px solid #e2e2e2;border-bottom:1px solid #e2e2e2;box-sizing:border-box"></div>
<div class="r" style="left:0;top:144px;width:1453px;height:25px;background:#ebebeb;border-top:1px solid #e2e2e2;border-bottom:1px solid #e2e2e2;box-sizing:border-box"></div>
<div class="r" style="left:0;top:192px;width:1453px;height:25px;background:#ebebeb;border-top:1px solid #e2e2e2;border-bottom:1px solid #e2e2e2;box-sizing:border-box"></div>
<div class="r" style="left:0;top:240px;width:1453px;height:25px;background:#ebebeb;border-top:1px solid #e2e2e2;border-bottom:1px solid #e2e2e2;box-sizing:border-box"></div>
<div class="r" style="left:0;top:288px;width:1453px;height:25px;background:#ebebeb;border-top:1px solid #e2e2e2;border-bottom:1px solid #e2e2e2;box-sizing:border-box"></div>
<div class="r" style="left:0;top:336px;width:1453px;height:25px;background:#ebebeb;border-top:1px solid #e2e2e2;border-bottom:1px solid #e2e2e2;box-sizing:border-box"></div>
<div class="r" style="left:0;top:384px;width:1453px;height:25px;background:#ebebeb;border-top:1px solid #e2e2e2;border-bottom:1px solid #e2e2e2;box-sizing:border-box"></div>
<div class="r" style="left:0;top:432px;width:1453px;height:25px;background:#ebebeb;border-top:1px solid #e2e2e2;border-bottom:1px solid #e2e2e2;box-sizing:border-box"></div>
<div class="r" style="left:0;top:480px;width:1453px;height:25px;background:#ebebeb;border-top:1px solid #e2e2e2;border-bottom:1px solid #e2e2e2;box-sizing:border-box"></div>
<div class="r" style="left:0;top:528px;width:1453px;height:25px;background:#ebebeb;border-top:1px solid #e2e2e2;border-bottom:1px solid #e2e2e2;box-sizing:border-box"></div>
<div class="r" style="left:0;top:576px;width:1453px;height:25px;background:#ebebeb;border-top:1px solid #e2e2e2;border-bottom:1px solid #e2e2e2;box-sizing:border-box"></div>
<div class="r" style="left:0;top:624px;width:1453px;height:25px;background:#ebebeb;border-top:1px solid #e2e2e2;border-bottom:1px solid #e2e2e2;box-sizing:border-box"></div>
<div class="r" style="left:0;top:672px;width:1453px;height:25px;background:#ebebeb;border-top:1px solid #e2e2e2;border-bottom:1px solid #e2e2e2;box-sizing:border-box"></div>
<div class="r" style="left:0;top:720px;width:1453px;height:25px;background:#ebebeb;border-top:1px solid #e2e2e2;border-bottom:1px solid #e2e2e2;box-sizing:border-box"></div>
<div class="r" style="left:0;top:768px;width:1453px;height:25px;background:#ebebeb;border-top:1px solid #e2e2e2;border-bottom:1px solid #e2e2e2;box-sizing:border-box"></div>
<div class="r" style="left:102px;top:0;width:1px;height:777px;background:#e0e0e0"></div>
<div class="r" style="left:186px;top:0;width:1px;height:777px;background:#646464"></div>
<div class="r" style="left:248px;top:0;width:1px;height:777px;background:#e0e0e0"></div>
<div class="r" style="left:313px;top:0;width:1px;height:777px;background:#e0e0e0"></div>
<div class="r" style="left:356px;top:0;width:1px;height:777px;background:#e0e0e0"></div>
<div class="r" style="left:464px;top:0;width:1px;height:777px;background:#e0e0e0"></div>
<div class="r" style="left:495px;top:0;width:1px;height:777px;background:#e0e0e0"></div>
<div class="r" style="left:684px;top:0;width:1px;height:777px;background:#e0e0e0"></div>
<div class="r" style="left:750px;top:0;width:1px;height:777px;background:#e0e0e0"></div>
<div class="r" style="left:1068px;top:0;width:1px;height:777px;background:#e0e0e0"></div>
<div class="r" style="left:1318px;top:0;width:1px;height:777px;background:#e0e0e0"></div>
<div class="r" style="left:1450px;top:0;width:1px;height:777px;background:#dcdcdc"></div>
<div class="t" style="left:5px;top:3.0px;width:96px;overflow:hidden;font-size:13.8px;line-height:20px;color:#1e1e1e;white-space:pre">09.06.2023</div>
<div class="t" style="left:107px;top:3.0px;width:78px;overflow:hidden;font-size:13.8px;line-height:20px;color:#1e1e1e;white-space:pre">09.06.2023</div>
<div class="t" style="left:186px;top:3.0px;width:58px;text-align:right;font-size:13.8px;line-height:20px;color:#1e1e1e">18222</div>
<div class="t" style="left:253px;top:3.0px;width:59px;overflow:hidden;font-size:13.8px;line-height:20px;color:#1e1e1e;white-space:pre">V</div>
<div class="t" style="left:356px;top:3.0px;width:104px;text-align:right;font-size:13.8px;line-height:20px;color:#1e1e1e">1,000000</div>
<div class="t" style="left:464px;top:3.0px;width:26.5px;text-align:right;font-size:13.8px;line-height:20px;color:#1e1e1e">1</div>
<div class="t" style="left:500px;top:3.0px;width:183px;overflow:hidden;font-size:13.8px;line-height:20px;color:#1e1e1e;white-space:pre">9090426</div>
<div class="t" style="left:755px;top:3.0px;width:312px;overflow:hidden;font-size:13.8px;line-height:20px;color:#1e1e1e;white-space:pre">&quot;Graf Zahl&quot; T-Shirt</div>
<div class="t" style="left:5px;top:27.0px;width:96px;overflow:hidden;font-size:13.8px;line-height:20px;color:#1e1e1e;white-space:pre">07.06.2023</div>
<div class="t" style="left:107px;top:27.0px;width:78px;overflow:hidden;font-size:13.8px;line-height:20px;color:#1e1e1e;white-space:pre">07.06.2023</div>
<div class="t" style="left:186px;top:27.0px;width:58px;text-align:right;font-size:13.8px;line-height:20px;color:#1e1e1e">18221</div>
<div class="t" style="left:253px;top:27.0px;width:59px;overflow:hidden;font-size:13.8px;line-height:20px;color:#1e1e1e;white-space:pre">V</div>
<div class="t" style="left:356px;top:27.0px;width:104px;text-align:right;font-size:13.8px;line-height:20px;color:#1e1e1e">1,000000</div>
<div class="t" style="left:464px;top:27.0px;width:26.5px;text-align:right;font-size:13.8px;line-height:20px;color:#1e1e1e">1</div>
<div class="t" style="left:500px;top:27.0px;width:183px;overflow:hidden;font-size:13.8px;line-height:20px;color:#1e1e1e;white-space:pre">9100622</div>
<div class="t" style="left:755px;top:27.0px;width:312px;overflow:hidden;font-size:13.8px;line-height:20px;color:#1e1e1e;white-space:pre">Wohnzimmergarnitur</div>
<div class="t" style="left:1073px;top:27.0px;width:244px;overflow:hidden;font-size:13.8px;line-height:20px;color:#1e1e1e;white-space:pre">P-Liste</div>
<div class="t" style="left:5px;top:51.0px;width:96px;overflow:hidden;font-size:13.8px;line-height:20px;color:#1e1e1e;white-space:pre">07.06.2023</div>
<div class="t" style="left:107px;top:51.0px;width:78px;overflow:hidden;font-size:13.8px;line-height:20px;color:#1e1e1e;white-space:pre">07.06.2023</div>
<div class="t" style="left:186px;top:51.0px;width:58px;text-align:right;font-size:13.8px;line-height:20px;color:#1e1e1e">18219</div>
<div class="t" style="left:253px;top:51.0px;width:59px;overflow:hidden;font-size:13.8px;line-height:20px;color:#1e1e1e;white-space:pre">V</div>
<div class="t" style="left:356px;top:51.0px;width:104px;text-align:right;font-size:13.8px;line-height:20px;color:#1e1e1e">1,000000</div>
<div class="t" style="left:464px;top:51.0px;width:26.5px;text-align:right;font-size:13.8px;line-height:20px;color:#1e1e1e">1</div>
<div class="t" style="left:500px;top:51.0px;width:183px;overflow:hidden;font-size:13.8px;line-height:20px;color:#1e1e1e;white-space:pre">9070005;SCHWARZ</div>
<div class="t" style="left:755px;top:51.0px;width:312px;overflow:hidden;font-size:13.8px;line-height:20px;color:#1e1e1e;white-space:pre">Jeans &#x27;Anna&#x27;</div>
<div class="t" style="left:1073px;top:51.0px;width:244px;overflow:hidden;font-size:13.8px;line-height:20px;color:#1e1e1e;white-space:pre">Black</div>
<div class="t" style="left:5px;top:75.0px;width:96px;overflow:hidden;font-size:13.8px;line-height:20px;color:#1e1e1e;white-space:pre">07.06.2023</div>
<div class="t" style="left:107px;top:75.0px;width:78px;overflow:hidden;font-size:13.8px;line-height:20px;color:#1e1e1e;white-space:pre">07.06.2023</div>
<div class="t" style="left:186px;top:75.0px;width:58px;text-align:right;font-size:13.8px;line-height:20px;color:#1e1e1e">18218</div>
<div class="t" style="left:253px;top:75.0px;width:59px;overflow:hidden;font-size:13.8px;line-height:20px;color:#1e1e1e;white-space:pre">V</div>
<div class="t" style="left:356px;top:75.0px;width:104px;text-align:right;font-size:13.8px;line-height:20px;color:#1e1e1e">5,123456</div>
<div class="t" style="left:464px;top:75.0px;width:26.5px;text-align:right;font-size:13.8px;line-height:20px;color:#1e1e1e">1</div>
<div class="t" style="left:500px;top:75.0px;width:183px;overflow:hidden;font-size:13.8px;line-height:20px;color:#1e1e1e;white-space:pre">9030026</div>
<div class="t" style="left:755px;top:75.0px;width:312px;overflow:hidden;font-size:13.8px;line-height:20px;color:#1e1e1e;white-space:pre">Lavendel Tee</div>
<div class="t" style="left:1073px;top:75.0px;width:244px;overflow:hidden;font-size:13.8px;line-height:20px;color:#1e1e1e;white-space:pre">6 Nachkommastellen</div>
<div class="t" style="left:5px;top:99.0px;width:96px;overflow:hidden;font-size:13.8px;line-height:20px;color:#1e1e1e;white-space:pre">07.06.2023</div>
<div class="t" style="left:107px;top:99.0px;width:78px;overflow:hidden;font-size:13.8px;line-height:20px;color:#1e1e1e;white-space:pre">07.06.2023</div>
<div class="t" style="left:186px;top:99.0px;width:58px;text-align:right;font-size:13.8px;line-height:20px;color:#1e1e1e">18216</div>
<div class="t" style="left:253px;top:99.0px;width:59px;overflow:hidden;font-size:13.8px;line-height:20px;color:#1e1e1e;white-space:pre">V</div>
<div class="t" style="left:356px;top:99.0px;width:104px;text-align:right;font-size:13.8px;line-height:20px;color:#1e1e1e">10,000000</div>
<div class="t" style="left:464px;top:99.0px;width:26.5px;text-align:right;font-size:13.8px;line-height:20px;color:#1e1e1e">1</div>
<div class="t" style="left:500px;top:99.0px;width:183px;overflow:hidden;font-size:13.8px;line-height:20px;color:#1e1e1e;white-space:pre">6025</div>
<div class="t" style="left:755px;top:99.0px;width:312px;overflow:hidden;font-size:13.8px;line-height:20px;color:#1e1e1e;white-space:pre">Campingstuhl</div>
<div class="t" style="left:1073px;top:99.0px;width:244px;overflow:hidden;font-size:13.8px;line-height:20px;color:#1e1e1e;white-space:pre">Chargenführung</div>
<div class="t" style="left:5px;top:123.0px;width:96px;overflow:hidden;font-size:13.8px;line-height:20px;color:#1e1e1e;white-space:pre">07.06.2023</div>
<div class="t" style="left:107px;top:123.0px;width:78px;overflow:hidden;font-size:13.8px;line-height:20px;color:#1e1e1e;white-space:pre">07.06.2023</div>
<div class="t" style="left:186px;top:123.0px;width:58px;text-align:right;font-size:13.8px;line-height:20px;color:#1e1e1e">18213</div>
<div class="t" style="left:253px;top:123.0px;width:59px;overflow:hidden;font-size:13.8px;line-height:20px;color:#1e1e1e;white-space:pre">V</div>
<div class="t" style="left:356px;top:123.0px;width:104px;text-align:right;font-size:13.8px;line-height:20px;color:#1e1e1e">1,000000</div>
<div class="t" style="left:464px;top:123.0px;width:26.5px;text-align:right;font-size:13.8px;line-height:20px;color:#1e1e1e">1</div>
<div class="t" style="left:500px;top:123.0px;width:183px;overflow:hidden;font-size:13.8px;line-height:20px;color:#1e1e1e;white-space:pre">9070005;SCHWARZ</div>
<div class="t" style="left:755px;top:123.0px;width:312px;overflow:hidden;font-size:13.8px;line-height:20px;color:#1e1e1e;white-space:pre">Jeans &#x27;Anna&#x27;</div>
<div class="t" style="left:1073px;top:123.0px;width:244px;overflow:hidden;font-size:13.8px;line-height:20px;color:#1e1e1e;white-space:pre">Black</div>
<div class="t" style="left:5px;top:147.0px;width:96px;overflow:hidden;font-size:13.8px;line-height:20px;color:#1e1e1e;white-space:pre">19.05.2023</div>
<div class="t" style="left:107px;top:147.0px;width:78px;overflow:hidden;font-size:13.8px;line-height:20px;color:#1e1e1e;white-space:pre">03.05.2023</div>
<div class="t" style="left:186px;top:147.0px;width:58px;text-align:right;font-size:13.8px;line-height:20px;color:#1e1e1e">18153</div>
<div class="t" style="left:253px;top:147.0px;width:59px;overflow:hidden;font-size:13.8px;line-height:20px;color:#1e1e1e;white-space:pre">A</div>
<div class="t" style="left:356px;top:147.0px;width:104px;text-align:right;font-size:13.8px;line-height:20px;color:#1e1e1e">1,000000</div>
<div class="t" style="left:464px;top:147.0px;width:26.5px;text-align:right;font-size:13.8px;line-height:20px;color:#1e1e1e">1</div>
<div class="t" style="left:500px;top:147.0px;width:183px;overflow:hidden;font-size:13.8px;line-height:20px;color:#1e1e1e;white-space:pre">9070005;SCHWARZ</div>
<div class="t" style="left:689px;top:147.0px;width:60px;overflow:hidden;font-size:13.8px;line-height:20px;color:#1e1e1e;white-space:pre">19792</div>
<div class="t" style="left:755px;top:147.0px;width:312px;overflow:hidden;font-size:13.8px;line-height:20px;color:#1e1e1e;white-space:pre">Jeans &#x27;Anna&#x27;</div>
<div class="t" style="left:1073px;top:147.0px;width:244px;overflow:hidden;font-size:13.8px;line-height:20px;color:#1e1e1e;white-space:pre">Black</div>
<div class="t" style="left:5px;top:171.0px;width:96px;overflow:hidden;font-size:13.8px;line-height:20px;color:#1e1e1e;white-space:pre">04.05.2023</div>
<div class="t" style="left:107px;top:171.0px;width:78px;overflow:hidden;font-size:13.8px;line-height:20px;color:#1e1e1e;white-space:pre">03.05.2023</div>
<div class="t" style="left:186px;top:171.0px;width:58px;text-align:right;font-size:13.8px;line-height:20px;color:#1e1e1e">18152</div>
<div class="t" style="left:253px;top:171.0px;width:59px;overflow:hidden;font-size:13.8px;line-height:20px;color:#1e1e1e;white-space:pre">P</div>
<div class="t" style="left:356px;top:171.0px;width:104px;text-align:right;font-size:13.8px;line-height:20px;color:#1e1e1e">1.200,000000</div>
<div class="t" style="left:464px;top:171.0px;width:26.5px;text-align:right;font-size:13.8px;line-height:20px;color:#1e1e1e">1</div>
<div class="t" style="left:500px;top:171.0px;width:183px;overflow:hidden;font-size:13.8px;line-height:20px;color:#1e1e1e;white-space:pre">9100949</div>
<div class="t" style="left:689px;top:171.0px;width:60px;overflow:hidden;font-size:13.8px;line-height:20px;color:#1e1e1e;white-space:pre">6500</div>
<div class="t" style="left:755px;top:171.0px;width:312px;overflow:hidden;font-size:13.8px;line-height:20px;color:#1e1e1e;white-space:pre">Holzstange</div>
<div class="t" style="left:1073px;top:171.0px;width:244px;overflow:hidden;font-size:13.8px;line-height:20px;color:#1e1e1e;white-space:pre">Produktionsmaterial</div>
<div class="t" style="left:1323px;top:171.0px;width:127px;overflow:hidden;font-size:13.8px;line-height:20px;color:#1e1e1e;white-space:pre">Zuschneiden von Holz</div>
<div class="t" style="left:5px;top:195.0px;width:96px;overflow:hidden;font-size:13.8px;line-height:20px;color:#1e1e1e;white-space:pre">03.05.2023</div>
<div class="t" style="left:107px;top:195.0px;width:78px;overflow:hidden;font-size:13.8px;line-height:20px;color:#1e1e1e;white-space:pre">03.05.2023</div>
<div class="t" style="left:186px;top:195.0px;width:58px;text-align:right;font-size:13.8px;line-height:20px;color:#1e1e1e">18151</div>
<div class="t" style="left:253px;top:195.0px;width:59px;overflow:hidden;font-size:13.8px;line-height:20px;color:#1e1e1e;white-space:pre">P</div>
<div class="t" style="left:356px;top:195.0px;width:104px;text-align:right;font-size:13.8px;line-height:20px;color:#1e1e1e">10,000000</div>
<div class="t" style="left:464px;top:195.0px;width:26.5px;text-align:right;font-size:13.8px;line-height:20px;color:#1e1e1e">1</div>
<div class="t" style="left:500px;top:195.0px;width:183px;overflow:hidden;font-size:13.8px;line-height:20px;color:#1e1e1e;white-space:pre">9101016</div>
<div class="t" style="left:689px;top:195.0px;width:60px;overflow:hidden;font-size:13.8px;line-height:20px;color:#1e1e1e;white-space:pre">6573</div>
<div class="t" style="left:755px;top:195.0px;width:312px;overflow:hidden;font-size:13.8px;line-height:20px;color:#1e1e1e;white-space:pre">Federballkorb</div>
<div class="t" style="left:5px;top:219.0px;width:96px;overflow:hidden;font-size:13.8px;line-height:20px;color:#1e1e1e;white-space:pre">18.04.2023</div>
<div class="t" style="left:107px;top:219.0px;width:78px;overflow:hidden;font-size:13.8px;line-height:20px;color:#1e1e1e;white-space:pre">18.04.2023</div>
<div class="t" style="left:186px;top:219.0px;width:58px;text-align:right;font-size:13.8px;line-height:20px;color:#1e1e1e">18131</div>
<div class="t" style="left:253px;top:219.0px;width:59px;overflow:hidden;font-size:13.8px;line-height:20px;color:#1e1e1e;white-space:pre">V</div>
<div class="t" style="left:356px;top:219.0px;width:104px;text-align:right;font-size:13.8px;line-height:20px;color:#1e1e1e">1,000000</div>
<div class="t" style="left:464px;top:219.0px;width:26.5px;text-align:right;font-size:13.8px;line-height:20px;color:#1e1e1e">1</div>
<div class="t" style="left:500px;top:219.0px;width:183px;overflow:hidden;font-size:13.8px;line-height:20px;color:#1e1e1e;white-space:pre">9100191</div>
<div class="t" style="left:755px;top:219.0px;width:312px;overflow:hidden;font-size:13.8px;line-height:20px;color:#1e1e1e;white-space:pre">Fahrrad</div>
<div class="t" style="left:5px;top:243.0px;width:96px;overflow:hidden;font-size:13.8px;line-height:20px;color:#1e1e1e;white-space:pre">12.04.2023</div>
<div class="t" style="left:107px;top:243.0px;width:78px;overflow:hidden;font-size:13.8px;line-height:20px;color:#1e1e1e;white-space:pre">12.04.2023</div>
<div class="t" style="left:186px;top:243.0px;width:58px;text-align:right;font-size:13.8px;line-height:20px;color:#1e1e1e">18128</div>
<div class="t" style="left:253px;top:243.0px;width:59px;overflow:hidden;font-size:13.8px;line-height:20px;color:#1e1e1e;white-space:pre">?</div>
<div class="t" style="left:356px;top:243.0px;width:104px;text-align:right;font-size:13.8px;line-height:20px;color:#1e1e1e">1,000000</div>
<div class="t" style="left:464px;top:243.0px;width:26.5px;text-align:right;font-size:13.8px;line-height:20px;color:#1e1e1e">1</div>
<div class="t" style="left:500px;top:243.0px;width:183px;overflow:hidden;font-size:13.8px;line-height:20px;color:#1e1e1e;white-space:pre">9070005;SCHWARZ</div>
<div class="t" style="left:755px;top:243.0px;width:312px;overflow:hidden;font-size:13.8px;line-height:20px;color:#1e1e1e;white-space:pre">Jeans &#x27;Anna&#x27;</div>
<div class="t" style="left:1073px;top:243.0px;width:244px;overflow:hidden;font-size:13.8px;line-height:20px;color:#1e1e1e;white-space:pre">Black</div>
<div class="t" style="left:5px;top:267.0px;width:96px;overflow:hidden;font-size:13.8px;line-height:20px;color:#1e1e1e;white-space:pre">06.04.2023</div>
<div class="t" style="left:107px;top:267.0px;width:78px;overflow:hidden;font-size:13.8px;line-height:20px;color:#1e1e1e;white-space:pre">06.04.2023</div>
<div class="t" style="left:186px;top:267.0px;width:58px;text-align:right;font-size:13.8px;line-height:20px;color:#1e1e1e">18121</div>
<div class="t" style="left:253px;top:267.0px;width:59px;overflow:hidden;font-size:13.8px;line-height:20px;color:#1e1e1e;white-space:pre">P</div>
<div class="t" style="left:356px;top:267.0px;width:104px;text-align:right;font-size:13.8px;line-height:20px;color:#1e1e1e">100,000000</div>
<div class="t" style="left:464px;top:267.0px;width:26.5px;text-align:right;font-size:13.8px;line-height:20px;color:#1e1e1e">1</div>
<div class="t" style="left:500px;top:267.0px;width:183px;overflow:hidden;font-size:13.8px;line-height:20px;color:#1e1e1e;white-space:pre">9100757</div>
<div class="t" style="left:689px;top:267.0px;width:60px;overflow:hidden;font-size:13.8px;line-height:20px;color:#1e1e1e;white-space:pre">6571</div>
<div class="t" style="left:755px;top:267.0px;width:312px;overflow:hidden;font-size:13.8px;line-height:20px;color:#1e1e1e;white-space:pre">9101013 Notizbuch DIN A5</div>
<div class="t" style="left:1073px;top:267.0px;width:244px;overflow:hidden;font-size:13.8px;line-height:20px;color:#1e1e1e;white-space:pre">Verpacken</div>
<div class="t" style="left:5px;top:291.0px;width:96px;overflow:hidden;font-size:13.8px;line-height:20px;color:#1e1e1e;white-space:pre">05.04.2023</div>
<div class="t" style="left:107px;top:291.0px;width:78px;overflow:hidden;font-size:13.8px;line-height:20px;color:#1e1e1e;white-space:pre">05.04.2023</div>
<div class="t" style="left:186px;top:291.0px;width:58px;text-align:right;font-size:13.8px;line-height:20px;color:#1e1e1e">17085</div>
<div class="t" style="left:253px;top:291.0px;width:59px;overflow:hidden;font-size:13.8px;line-height:20px;color:#1e1e1e;white-space:pre">P</div>
<div class="t" style="left:356px;top:291.0px;width:104px;text-align:right;font-size:13.8px;line-height:20px;color:#1e1e1e">101,000000</div>
<div class="t" style="left:464px;top:291.0px;width:26.5px;text-align:right;font-size:13.8px;line-height:20px;color:#1e1e1e">1</div>
<div class="t" style="left:500px;top:291.0px;width:183px;overflow:hidden;font-size:13.8px;line-height:20px;color:#1e1e1e;white-space:pre">9100907</div>
<div class="t" style="left:689px;top:291.0px;width:60px;overflow:hidden;font-size:13.8px;line-height:20px;color:#1e1e1e;white-space:pre">6419</div>
<div class="t" style="left:755px;top:291.0px;width:312px;overflow:hidden;font-size:13.8px;line-height:20px;color:#1e1e1e;white-space:pre">Garnrolle 250m  Farbe: Blau</div>
<div class="t" style="left:5px;top:315.0px;width:96px;overflow:hidden;font-size:13.8px;line-height:20px;color:#1e1e1e;white-space:pre">03.04.2023</div>
<div class="t" style="left:107px;top:315.0px;width:78px;overflow:hidden;font-size:13.8px;line-height:20px;color:#1e1e1e;white-space:pre">03.04.2023</div>
<div class="t" style="left:186px;top:315.0px;width:58px;text-align:right;font-size:13.8px;line-height:20px;color:#1e1e1e">18097</div>
<div class="t" style="left:253px;top:315.0px;width:59px;overflow:hidden;font-size:13.8px;line-height:20px;color:#1e1e1e;white-space:pre">L</div>
<div class="t" style="left:356px;top:315.0px;width:104px;text-align:right;font-size:13.8px;line-height:20px;color:#1e1e1e">1,000000</div>
<div class="t" style="left:464px;top:315.0px;width:26.5px;text-align:right;font-size:13.8px;line-height:20px;color:#1e1e1e">1</div>
<div class="t" style="left:500px;top:315.0px;width:183px;overflow:hidden;font-size:13.8px;line-height:20px;color:#1e1e1e;white-space:pre">9100191</div>
<div class="t" style="left:755px;top:315.0px;width:312px;overflow:hidden;font-size:13.8px;line-height:20px;color:#1e1e1e;white-space:pre">Fahrrad</div>
<div class="t" style="left:5px;top:339.0px;width:96px;overflow:hidden;font-size:13.8px;line-height:20px;color:#1e1e1e;white-space:pre">30.03.2023</div>
<div class="t" style="left:107px;top:339.0px;width:78px;overflow:hidden;font-size:13.8px;line-height:20px;color:#1e1e1e;white-space:pre">30.03.2023</div>
<div class="t" style="left:186px;top:339.0px;width:58px;text-align:right;font-size:13.8px;line-height:20px;color:#1e1e1e">18094</div>
<div class="t" style="left:253px;top:339.0px;width:59px;overflow:hidden;font-size:13.8px;line-height:20px;color:#1e1e1e;white-space:pre">P</div>
<div class="t" style="left:356px;top:339.0px;width:104px;text-align:right;font-size:13.8px;line-height:20px;color:#1e1e1e">10,000000</div>
<div class="t" style="left:464px;top:339.0px;width:26.5px;text-align:right;font-size:13.8px;line-height:20px;color:#1e1e1e">1</div>
<div class="t" style="left:500px;top:339.0px;width:183px;overflow:hidden;font-size:13.8px;line-height:20px;color:#1e1e1e;white-space:pre">9090358</div>
<div class="t" style="left:689px;top:339.0px;width:60px;overflow:hidden;font-size:13.8px;line-height:20px;color:#1e1e1e;white-space:pre">6554</div>
<div class="t" style="left:755px;top:339.0px;width:312px;overflow:hidden;font-size:13.8px;line-height:20px;color:#1e1e1e;white-space:pre">9101013 Notizbuch DIN A5</div>
<div class="t" style="left:1073px;top:339.0px;width:244px;overflow:hidden;font-size:13.8px;line-height:20px;color:#1e1e1e;white-space:pre">Verpacken</div>
<div class="t" style="left:1323px;top:339.0px;width:127px;overflow:hidden;font-size:13.8px;line-height:20px;color:#1e1e1e;white-space:pre">test</div>
<div class="t" style="left:5px;top:363.0px;width:96px;overflow:hidden;font-size:13.8px;line-height:20px;color:#1e1e1e;white-space:pre">06.03.2023</div>
<div class="t" style="left:107px;top:363.0px;width:78px;overflow:hidden;font-size:13.8px;line-height:20px;color:#1e1e1e;white-space:pre">02.03.2023</div>
<div class="t" style="left:186px;top:363.0px;width:58px;text-align:right;font-size:13.8px;line-height:20px;color:#1e1e1e">18020</div>
<div class="t" style="left:253px;top:363.0px;width:59px;overflow:hidden;font-size:13.8px;line-height:20px;color:#1e1e1e;white-space:pre">P</div>
<div class="t" style="left:356px;top:363.0px;width:104px;text-align:right;font-size:13.8px;line-height:20px;color:#1e1e1e">100,000000</div>
<div class="t" style="left:464px;top:363.0px;width:26.5px;text-align:right;font-size:13.8px;line-height:20px;color:#1e1e1e">1</div>
<div class="t" style="left:500px;top:363.0px;width:183px;overflow:hidden;font-size:13.8px;line-height:20px;color:#1e1e1e;white-space:pre">9090358</div>
<div class="t" style="left:689px;top:363.0px;width:60px;overflow:hidden;font-size:13.8px;line-height:20px;color:#1e1e1e;white-space:pre">6530</div>
<div class="t" style="left:755px;top:363.0px;width:312px;overflow:hidden;font-size:13.8px;line-height:20px;color:#1e1e1e;white-space:pre">9101013 Notizbuch DIN A5</div>
<div class="t" style="left:1073px;top:363.0px;width:244px;overflow:hidden;font-size:13.8px;line-height:20px;color:#1e1e1e;white-space:pre">Verpacken</div>
<div class="t" style="left:1323px;top:363.0px;width:127px;overflow:hidden;font-size:13.8px;line-height:20px;color:#1e1e1e;white-space:pre">test</div>
<div class="t" style="left:5px;top:387.0px;width:96px;overflow:hidden;font-size:13.8px;line-height:20px;color:#1e1e1e;white-space:pre">06.03.2023</div>
<div class="t" style="left:107px;top:387.0px;width:78px;overflow:hidden;font-size:13.8px;line-height:20px;color:#1e1e1e;white-space:pre">02.03.2023</div>
<div class="t" style="left:186px;top:387.0px;width:58px;text-align:right;font-size:13.8px;line-height:20px;color:#1e1e1e">18017</div>
<div class="t" style="left:253px;top:387.0px;width:59px;overflow:hidden;font-size:13.8px;line-height:20px;color:#1e1e1e;white-space:pre">P</div>
<div class="t" style="left:356px;top:387.0px;width:104px;text-align:right;font-size:13.8px;line-height:20px;color:#1e1e1e">100,000000</div>
<div class="t" style="left:464px;top:387.0px;width:26.5px;text-align:right;font-size:13.8px;line-height:20px;color:#1e1e1e">1</div>
<div class="t" style="left:500px;top:387.0px;width:183px;overflow:hidden;font-size:13.8px;line-height:20px;color:#1e1e1e;white-space:pre">9090358</div>
<div class="t" style="left:689px;top:387.0px;width:60px;overflow:hidden;font-size:13.8px;line-height:20px;color:#1e1e1e;white-space:pre">6529</div>
<div class="t" style="left:755px;top:387.0px;width:312px;overflow:hidden;font-size:13.8px;line-height:20px;color:#1e1e1e;white-space:pre">9101013 Notizbuch DIN A5</div>
<div class="t" style="left:1073px;top:387.0px;width:244px;overflow:hidden;font-size:13.8px;line-height:20px;color:#1e1e1e;white-space:pre">Verpacken</div>
<div class="t" style="left:1323px;top:387.0px;width:127px;overflow:hidden;font-size:13.8px;line-height:20px;color:#1e1e1e;white-space:pre">test</div>
<div class="t" style="left:5px;top:411.0px;width:96px;overflow:hidden;font-size:13.8px;line-height:20px;color:#1e1e1e;white-space:pre">02.03.2023</div>
<div class="t" style="left:107px;top:411.0px;width:78px;overflow:hidden;font-size:13.8px;line-height:20px;color:#1e1e1e;white-space:pre">02.03.2023</div>
<div class="t" style="left:186px;top:411.0px;width:58px;text-align:right;font-size:13.8px;line-height:20px;color:#1e1e1e">18014</div>
<div class="t" style="left:253px;top:411.0px;width:59px;overflow:hidden;font-size:13.8px;line-height:20px;color:#1e1e1e;white-space:pre">P</div>
<div class="t" style="left:356px;top:411.0px;width:104px;text-align:right;font-size:13.8px;line-height:20px;color:#1e1e1e">100,000000</div>
<div class="t" style="left:464px;top:411.0px;width:26.5px;text-align:right;font-size:13.8px;line-height:20px;color:#1e1e1e">1</div>
<div class="t" style="left:500px;top:411.0px;width:183px;overflow:hidden;font-size:13.8px;line-height:20px;color:#1e1e1e;white-space:pre">9090358</div>
<div class="t" style="left:689px;top:411.0px;width:60px;overflow:hidden;font-size:13.8px;line-height:20px;color:#1e1e1e;white-space:pre">6528</div>
<div class="t" style="left:755px;top:411.0px;width:312px;overflow:hidden;font-size:13.8px;line-height:20px;color:#1e1e1e;white-space:pre">9101013 Notizbuch DIN A5</div>
<div class="t" style="left:1073px;top:411.0px;width:244px;overflow:hidden;font-size:13.8px;line-height:20px;color:#1e1e1e;white-space:pre">Verpacken</div>
<div class="t" style="left:1323px;top:411.0px;width:127px;overflow:hidden;font-size:13.8px;line-height:20px;color:#1e1e1e;white-space:pre">test</div>
<div class="t" style="left:5px;top:435.0px;width:96px;overflow:hidden;font-size:13.8px;line-height:20px;color:#1e1e1e;white-space:pre">14.02.2023</div>
<div class="t" style="left:107px;top:435.0px;width:78px;overflow:hidden;font-size:13.8px;line-height:20px;color:#1e1e1e;white-space:pre">14.02.2023</div>
<div class="t" style="left:186px;top:435.0px;width:58px;text-align:right;font-size:13.8px;line-height:20px;color:#1e1e1e">17955</div>
<div class="t" style="left:253px;top:435.0px;width:59px;overflow:hidden;font-size:13.8px;line-height:20px;color:#1e1e1e;white-space:pre">V</div>
<div class="t" style="left:356px;top:435.0px;width:104px;text-align:right;font-size:13.8px;line-height:20px;color:#1e1e1e">1,120000</div>
<div class="t" style="left:464px;top:435.0px;width:26.5px;text-align:right;font-size:13.8px;line-height:20px;color:#1e1e1e">1</div>
<div class="t" style="left:500px;top:435.0px;width:183px;overflow:hidden;font-size:13.8px;line-height:20px;color:#1e1e1e;white-space:pre">1010004</div>
<div class="t" style="left:755px;top:435.0px;width:312px;overflow:hidden;font-size:13.8px;line-height:20px;color:#1e1e1e;white-space:pre">Portionierspüle 1</div>
<div class="t" style="left:1073px;top:435.0px;width:244px;overflow:hidden;font-size:13.8px;line-height:20px;color:#1e1e1e;white-space:pre">Portionierspüle mit Wasserhahn für Isettahaus</div>
<div class="t" style="left:5px;top:459.0px;width:96px;overflow:hidden;font-size:13.8px;line-height:20px;color:#1e1e1e;white-space:pre">31.01.2023</div>
<div class="t" style="left:107px;top:459.0px;width:78px;overflow:hidden;font-size:13.8px;line-height:20px;color:#1e1e1e;white-space:pre">31.01.2023</div>
<div class="t" style="left:186px;top:459.0px;width:58px;text-align:right;font-size:13.8px;line-height:20px;color:#1e1e1e">17952</div>
<div class="t" style="left:253px;top:459.0px;width:59px;overflow:hidden;font-size:13.8px;line-height:20px;color:#1e1e1e;white-space:pre">?</div>
<div class="t" style="left:356px;top:459.0px;width:104px;text-align:right;font-size:13.8px;line-height:20px;color:#1e1e1e">100,000000</div>
<div class="t" style="left:464px;top:459.0px;width:26.5px;text-align:right;font-size:13.8px;line-height:20px;color:#1e1e1e">1</div>
<div class="t" style="left:500px;top:459.0px;width:183px;overflow:hidden;font-size:13.8px;line-height:20px;color:#1e1e1e;white-space:pre">100002</div>
<div class="t" style="left:755px;top:459.0px;width:312px;overflow:hidden;font-size:13.8px;line-height:20px;color:#1e1e1e;white-space:pre">Bodeneinheit</div>
<div class="t" style="left:5px;top:483.0px;width:96px;overflow:hidden;font-size:13.8px;line-height:20px;color:#1e1e1e;white-space:pre">31.01.2023</div>
<div class="t" style="left:107px;top:483.0px;width:78px;overflow:hidden;font-size:13.8px;line-height:20px;color:#1e1e1e;white-space:pre">31.01.2023</div>
<div class="t" style="left:186px;top:483.0px;width:58px;text-align:right;font-size:13.8px;line-height:20px;color:#1e1e1e">17951</div>
<div class="t" style="left:253px;top:483.0px;width:59px;overflow:hidden;font-size:13.8px;line-height:20px;color:#1e1e1e;white-space:pre">?</div>
<div class="t" style="left:356px;top:483.0px;width:104px;text-align:right;font-size:13.8px;line-height:20px;color:#1e1e1e">10,000000</div>
<div class="t" style="left:464px;top:483.0px;width:26.5px;text-align:right;font-size:13.8px;line-height:20px;color:#1e1e1e">1</div>
<div class="t" style="left:500px;top:483.0px;width:183px;overflow:hidden;font-size:13.8px;line-height:20px;color:#1e1e1e;white-space:pre">100002</div>
<div class="t" style="left:755px;top:483.0px;width:312px;overflow:hidden;font-size:13.8px;line-height:20px;color:#1e1e1e;white-space:pre">Bodeneinheit</div>
<div class="t" style="left:5px;top:507.0px;width:96px;overflow:hidden;font-size:13.8px;line-height:20px;color:#1e1e1e;white-space:pre">31.01.2023</div>
<div class="t" style="left:107px;top:507.0px;width:78px;overflow:hidden;font-size:13.8px;line-height:20px;color:#1e1e1e;white-space:pre">31.01.2023</div>
<div class="t" style="left:186px;top:507.0px;width:58px;text-align:right;font-size:13.8px;line-height:20px;color:#1e1e1e">17950</div>
<div class="t" style="left:253px;top:507.0px;width:59px;overflow:hidden;font-size:13.8px;line-height:20px;color:#1e1e1e;white-space:pre">?</div>
<div class="t" style="left:356px;top:507.0px;width:104px;text-align:right;font-size:13.8px;line-height:20px;color:#1e1e1e">10,000000</div>
<div class="t" style="left:464px;top:507.0px;width:26.5px;text-align:right;font-size:13.8px;line-height:20px;color:#1e1e1e">1</div>
<div class="t" style="left:500px;top:507.0px;width:183px;overflow:hidden;font-size:13.8px;line-height:20px;color:#1e1e1e;white-space:pre">100001</div>
<div class="t" style="left:755px;top:507.0px;width:312px;overflow:hidden;font-size:13.8px;line-height:20px;color:#1e1e1e;white-space:pre">Getriebeeinheit GE 22/7</div>
<div class="t" style="left:5px;top:531.0px;width:96px;overflow:hidden;font-size:13.8px;line-height:20px;color:#1e1e1e;white-space:pre">31.01.2023</div>
<div class="t" style="left:107px;top:531.0px;width:78px;overflow:hidden;font-size:13.8px;line-height:20px;color:#1e1e1e;white-space:pre">31.01.2023</div>
<div class="t" style="left:186px;top:531.0px;width:58px;text-align:right;font-size:13.8px;line-height:20px;color:#1e1e1e">17949</div>
<div class="t" style="left:253px;top:531.0px;width:59px;overflow:hidden;font-size:13.8px;line-height:20px;color:#1e1e1e;white-space:pre">?</div>
<div class="t" style="left:356px;top:531.0px;width:104px;text-align:right;font-size:13.8px;line-height:20px;color:#1e1e1e">10,000000</div>
<div class="t" style="left:464px;top:531.0px;width:26.5px;text-align:right;font-size:13.8px;line-height:20px;color:#1e1e1e">1</div>
<div class="t" style="left:500px;top:531.0px;width:183px;overflow:hidden;font-size:13.8px;line-height:20px;color:#1e1e1e;white-space:pre">100002</div>
<div class="t" style="left:755px;top:531.0px;width:312px;overflow:hidden;font-size:13.8px;line-height:20px;color:#1e1e1e;white-space:pre">Bodeneinheit</div>
<div class="t" style="left:5px;top:555.0px;width:96px;overflow:hidden;font-size:13.8px;line-height:20px;color:#1e1e1e;white-space:pre">06.12.2022</div>
<div class="t" style="left:107px;top:555.0px;width:78px;overflow:hidden;font-size:13.8px;line-height:20px;color:#1e1e1e;white-space:pre">06.12.2022</div>
<div class="t" style="left:186px;top:555.0px;width:58px;text-align:right;font-size:13.8px;line-height:20px;color:#1e1e1e">17912</div>
<div class="t" style="left:253px;top:555.0px;width:59px;overflow:hidden;font-size:13.8px;line-height:20px;color:#1e1e1e;white-space:pre">V</div>
<div class="t" style="left:356px;top:555.0px;width:104px;text-align:right;font-size:13.8px;line-height:20px;color:#1e1e1e">15,000000</div>
<div class="t" style="left:464px;top:555.0px;width:26.5px;text-align:right;font-size:13.8px;line-height:20px;color:#1e1e1e">1</div>
<div class="t" style="left:500px;top:555.0px;width:183px;overflow:hidden;font-size:13.8px;line-height:20px;color:#1e1e1e;white-space:pre">1010004</div>
<div class="t" style="left:755px;top:555.0px;width:312px;overflow:hidden;font-size:13.8px;line-height:20px;color:#1e1e1e;white-space:pre">Portionierspüle 1</div>
<div class="t" style="left:1073px;top:555.0px;width:244px;overflow:hidden;font-size:13.8px;line-height:20px;color:#1e1e1e;white-space:pre">Portionierspüle mit Wasserhahn für Isettahaus</div>
<div class="t" style="left:5px;top:579.0px;width:96px;overflow:hidden;font-size:13.8px;line-height:20px;color:#1e1e1e;white-space:pre">09.11.2022</div>
<div class="t" style="left:107px;top:579.0px;width:78px;overflow:hidden;font-size:13.8px;line-height:20px;color:#1e1e1e;white-space:pre">09.11.2022</div>
<div class="t" style="left:186px;top:579.0px;width:58px;text-align:right;font-size:13.8px;line-height:20px;color:#1e1e1e">17906</div>
<div class="t" style="left:253px;top:579.0px;width:59px;overflow:hidden;font-size:13.8px;line-height:20px;color:#1e1e1e;white-space:pre">V</div>
<div class="t" style="left:356px;top:579.0px;width:104px;text-align:right;font-size:13.8px;line-height:20px;color:#1e1e1e">10,000000</div>
<div class="t" style="left:464px;top:579.0px;width:26.5px;text-align:right;font-size:13.8px;line-height:20px;color:#1e1e1e">1</div>
<div class="t" style="left:500px;top:579.0px;width:183px;overflow:hidden;font-size:13.8px;line-height:20px;color:#1e1e1e;white-space:pre">1010004</div>
<div class="t" style="left:755px;top:579.0px;width:312px;overflow:hidden;font-size:13.8px;line-height:20px;color:#1e1e1e;white-space:pre">Portionierspüle 1</div>
<div class="t" style="left:1073px;top:579.0px;width:244px;overflow:hidden;font-size:13.8px;line-height:20px;color:#1e1e1e;white-space:pre">Portionierspüle mit Wasserhahn für Isettahaus</div>
<div class="t" style="left:5px;top:603.0px;width:96px;overflow:hidden;font-size:13.8px;line-height:20px;color:#1e1e1e;white-space:pre">23.08.2022</div>
<div class="t" style="left:107px;top:603.0px;width:78px;overflow:hidden;font-size:13.8px;line-height:20px;color:#1e1e1e;white-space:pre">23.08.2022</div>
<div class="t" style="left:186px;top:603.0px;width:58px;text-align:right;font-size:13.8px;line-height:20px;color:#1e1e1e">17764</div>
<div class="t" style="left:253px;top:603.0px;width:59px;overflow:hidden;font-size:13.8px;line-height:20px;color:#1e1e1e;white-space:pre">V</div>
<div class="t" style="left:356px;top:603.0px;width:104px;text-align:right;font-size:13.8px;line-height:20px;color:#1e1e1e">100,000000</div>
<div class="t" style="left:464px;top:603.0px;width:26.5px;text-align:right;font-size:13.8px;line-height:20px;color:#1e1e1e">1</div>
<div class="t" style="left:500px;top:603.0px;width:183px;overflow:hidden;font-size:13.8px;line-height:20px;color:#1e1e1e;white-space:pre">6028</div>
<div class="t" style="left:755px;top:603.0px;width:312px;overflow:hidden;font-size:13.8px;line-height:20px;color:#1e1e1e;white-space:pre">Eistee mit Pfirsichgeschmack - 1Liter Packung</div>
<div class="t" style="left:1073px;top:603.0px;width:244px;overflow:hidden;font-size:13.8px;line-height:20px;color:#1e1e1e;white-space:pre">Chargengeführt</div>
<div class="t" style="left:1323px;top:603.0px;width:127px;overflow:hidden;font-size:13.8px;line-height:20px;color:#1e1e1e;white-space:pre">Info 1 - 3 befüllt</div>
<div class="t" style="left:5px;top:627.0px;width:96px;overflow:hidden;font-size:13.8px;line-height:20px;color:#1e1e1e;white-space:pre">17.08.2022</div>
<div class="t" style="left:107px;top:627.0px;width:78px;overflow:hidden;font-size:13.8px;line-height:20px;color:#1e1e1e;white-space:pre">17.08.2022</div>
<div class="t" style="left:186px;top:627.0px;width:58px;text-align:right;font-size:13.8px;line-height:20px;color:#1e1e1e">17758</div>
<div class="t" style="left:253px;top:627.0px;width:59px;overflow:hidden;font-size:13.8px;line-height:20px;color:#1e1e1e;white-space:pre">V</div>
<div class="t" style="left:356px;top:627.0px;width:104px;text-align:right;font-size:13.8px;line-height:20px;color:#1e1e1e">100,000000</div>
<div class="t" style="left:464px;top:627.0px;width:26.5px;text-align:right;font-size:13.8px;line-height:20px;color:#1e1e1e">1</div>
<div class="t" style="left:500px;top:627.0px;width:183px;overflow:hidden;font-size:13.8px;line-height:20px;color:#1e1e1e;white-space:pre">9100987</div>
<div class="t" style="left:755px;top:627.0px;width:312px;overflow:hidden;font-size:13.8px;line-height:20px;color:#1e1e1e;white-space:pre">Holzlok - Emma</div>
<div class="t" style="left:1073px;top:627.0px;width:244px;overflow:hidden;font-size:13.8px;line-height:20px;color:#1e1e1e;white-space:pre">Produktionsmaterial</div>
<div class="t" style="left:1323px;top:627.0px;width:127px;overflow:hidden;font-size:13.8px;line-height:20px;color:#1e1e1e;white-space:pre">EK-Preisliste</div>
<div class="t" style="left:5px;top:651.0px;width:96px;overflow:hidden;font-size:13.8px;line-height:20px;color:#1e1e1e;white-space:pre">17.08.2022</div>
<div class="t" style="left:107px;top:651.0px;width:78px;overflow:hidden;font-size:13.8px;line-height:20px;color:#1e1e1e;white-space:pre">17.08.2022</div>
<div class="t" style="left:186px;top:651.0px;width:58px;text-align:right;font-size:13.8px;line-height:20px;color:#1e1e1e">17755</div>
<div class="t" style="left:253px;top:651.0px;width:59px;overflow:hidden;font-size:13.8px;line-height:20px;color:#1e1e1e;white-space:pre">V</div>
<div class="t" style="left:356px;top:651.0px;width:104px;text-align:right;font-size:13.8px;line-height:20px;color:#1e1e1e">100,000000</div>
<div class="t" style="left:464px;top:651.0px;width:26.5px;text-align:right;font-size:13.8px;line-height:20px;color:#1e1e1e">1</div>
<div class="t" style="left:500px;top:651.0px;width:183px;overflow:hidden;font-size:13.8px;line-height:20px;color:#1e1e1e;white-space:pre">9100989</div>
<div class="t" style="left:755px;top:651.0px;width:312px;overflow:hidden;font-size:13.8px;line-height:20px;color:#1e1e1e;white-space:pre">Holzwaggon - Personenwagen (klein)</div>
<div class="t" style="left:1073px;top:651.0px;width:244px;overflow:hidden;font-size:13.8px;line-height:20px;color:#1e1e1e;white-space:pre">Produktionsmaterial</div>
<div class="t" style="left:1323px;top:651.0px;width:127px;overflow:hidden;font-size:13.8px;line-height:20px;color:#1e1e1e;white-space:pre">EK-Preisliste</div>
<div class="t" style="left:5px;top:675.0px;width:96px;overflow:hidden;font-size:13.8px;line-height:20px;color:#1e1e1e;white-space:pre">08.08.2022</div>
<div class="t" style="left:107px;top:675.0px;width:78px;overflow:hidden;font-size:13.8px;line-height:20px;color:#1e1e1e;white-space:pre">08.04.2022</div>
<div class="t" style="left:186px;top:675.0px;width:58px;text-align:right;font-size:13.8px;line-height:20px;color:#1e1e1e">17582</div>
<div class="t" style="left:253px;top:675.0px;width:59px;overflow:hidden;font-size:13.8px;line-height:20px;color:#1e1e1e;white-space:pre">V</div>
<div class="t" style="left:356px;top:675.0px;width:104px;text-align:right;font-size:13.8px;line-height:20px;color:#1e1e1e">15,000000</div>
<div class="t" style="left:464px;top:675.0px;width:26.5px;text-align:right;font-size:13.8px;line-height:20px;color:#1e1e1e">1</div>
<div class="t" style="left:500px;top:675.0px;width:183px;overflow:hidden;font-size:13.8px;line-height:20px;color:#1e1e1e;white-space:pre">1010004</div>
<div class="t" style="left:755px;top:675.0px;width:312px;overflow:hidden;font-size:13.8px;line-height:20px;color:#1e1e1e;white-space:pre">Portionierspüle 1</div>
<div class="t" style="left:1073px;top:675.0px;width:244px;overflow:hidden;font-size:13.8px;line-height:20px;color:#1e1e1e;white-space:pre">Portionierspüle mit Wasserhahn für Isettahaus</div>
<div class="t" style="left:5px;top:699.0px;width:96px;overflow:hidden;font-size:13.8px;line-height:20px;color:#1e1e1e;white-space:pre">05.08.2022</div>
<div class="t" style="left:107px;top:699.0px;width:78px;overflow:hidden;font-size:13.8px;line-height:20px;color:#1e1e1e;white-space:pre">05.04.2022</div>
<div class="t" style="left:186px;top:699.0px;width:58px;text-align:right;font-size:13.8px;line-height:20px;color:#1e1e1e">17547</div>
<div class="t" style="left:253px;top:699.0px;width:59px;overflow:hidden;font-size:13.8px;line-height:20px;color:#1e1e1e;white-space:pre">V</div>
<div class="t" style="left:356px;top:699.0px;width:104px;text-align:right;font-size:13.8px;line-height:20px;color:#1e1e1e">104,000000</div>
<div class="t" style="left:464px;top:699.0px;width:26.5px;text-align:right;font-size:13.8px;line-height:20px;color:#1e1e1e">1</div>
<div class="t" style="left:500px;top:699.0px;width:183px;overflow:hidden;font-size:13.8px;line-height:20px;color:#1e1e1e;white-space:pre">4003</div>
<div class="t" style="left:755px;top:699.0px;width:312px;overflow:hidden;font-size:13.8px;line-height:20px;color:#1e1e1e;white-space:pre">Hafenflocken Packung 500g</div>
<div class="t" style="left:1073px;top:699.0px;width:244px;overflow:hidden;font-size:13.8px;line-height:20px;color:#1e1e1e;white-space:pre">Mehrere Lieferanten</div>
<div class="t" style="left:1323px;top:699.0px;width:127px;overflow:hidden;font-size:13.8px;line-height:20px;color:#1e1e1e;white-space:pre">Bestellvorschläge erzeugen</div>
<div class="t" style="left:5px;top:723.0px;width:96px;overflow:hidden;font-size:13.8px;line-height:20px;color:#1e1e1e;white-space:pre">04.08.2022</div>
<div class="t" style="left:107px;top:723.0px;width:78px;overflow:hidden;font-size:13.8px;line-height:20px;color:#1e1e1e;white-space:pre">04.08.2022</div>
<div class="t" style="left:186px;top:723.0px;width:58px;text-align:right;font-size:13.8px;line-height:20px;color:#1e1e1e">17750</div>
<div class="t" style="left:253px;top:723.0px;width:59px;overflow:hidden;font-size:13.8px;line-height:20px;color:#1e1e1e;white-space:pre">V</div>
<div class="t" style="left:356px;top:723.0px;width:104px;text-align:right;font-size:13.8px;line-height:20px;color:#1e1e1e">5,000000</div>
<div class="t" style="left:464px;top:723.0px;width:26.5px;text-align:right;font-size:13.8px;line-height:20px;color:#1e1e1e">1</div>
<div class="t" style="left:500px;top:723.0px;width:183px;overflow:hidden;font-size:13.8px;line-height:20px;color:#1e1e1e;white-space:pre">1010004</div>
<div class="t" style="left:755px;top:723.0px;width:312px;overflow:hidden;font-size:13.8px;line-height:20px;color:#1e1e1e;white-space:pre">Portionierspüle 1</div>
<div class="t" style="left:1073px;top:723.0px;width:244px;overflow:hidden;font-size:13.8px;line-height:20px;color:#1e1e1e;white-space:pre">Portionierspüle mit Wasserhahn für Isettahaus</div>
<div class="t" style="left:5px;top:747.0px;width:96px;overflow:hidden;font-size:13.8px;line-height:20px;color:#1e1e1e;white-space:pre">22.06.2022</div>
<div class="t" style="left:107px;top:747.0px;width:78px;overflow:hidden;font-size:13.8px;line-height:20px;color:#1e1e1e;white-space:pre">22.06.2022</div>
<div class="t" style="left:186px;top:747.0px;width:58px;text-align:right;font-size:13.8px;line-height:20px;color:#1e1e1e">17735</div>
<div class="t" style="left:253px;top:747.0px;width:59px;overflow:hidden;font-size:13.8px;line-height:20px;color:#1e1e1e;white-space:pre">V</div>
<div class="t" style="left:356px;top:747.0px;width:104px;text-align:right;font-size:13.8px;line-height:20px;color:#1e1e1e">22,000000</div>
<div class="t" style="left:464px;top:747.0px;width:26.5px;text-align:right;font-size:13.8px;line-height:20px;color:#1e1e1e">1</div>
<div class="t" style="left:500px;top:747.0px;width:183px;overflow:hidden;font-size:13.8px;line-height:20px;color:#1e1e1e;white-space:pre">1007</div>
<div class="t" style="left:755px;top:747.0px;width:312px;overflow:hidden;font-size:13.8px;line-height:20px;color:#1e1e1e;white-space:pre">Reportsummierung HSL-Artikel Nr.5</div>
<div class="t" style="left:5px;top:771.0px;width:96px;overflow:hidden;font-size:13.8px;line-height:20px;color:#1e1e1e;white-space:pre">20.06.2022</div>
<div class="t" style="left:107px;top:771.0px;width:78px;overflow:hidden;font-size:13.8px;line-height:20px;color:#1e1e1e;white-space:pre">20.06.2022</div>
<div class="t" style="left:186px;top:771.0px;width:58px;text-align:right;font-size:13.8px;line-height:20px;color:#1e1e1e">17734</div>
<div class="t" style="left:253px;top:771.0px;width:59px;overflow:hidden;font-size:13.8px;line-height:20px;color:#1e1e1e;white-space:pre">V</div>
<div class="t" style="left:356px;top:771.0px;width:104px;text-align:right;font-size:13.8px;line-height:20px;color:#1e1e1e">25,000000</div>
<div class="t" style="left:464px;top:771.0px;width:26.5px;text-align:right;font-size:13.8px;line-height:20px;color:#1e1e1e">1</div>
<div class="t" style="left:500px;top:771.0px;width:183px;overflow:hidden;font-size:13.8px;line-height:20px;color:#1e1e1e;white-space:pre">1010065;SCHWARZ;SUMMI</div>
<div class="t" style="left:755px;top:771.0px;width:312px;overflow:hidden;font-size:13.8px;line-height:20px;color:#1e1e1e;white-space:pre">1GB 533MHz DDR2 Non-ECC CL4 DIMM</div>
<div class="t" style="left:1073px;top:771.0px;width:244px;overflow:hidden;font-size:13.8px;line-height:20px;color:#1e1e1e;white-space:pre">Schwarz Gummi</div>
</div>
<div class="r" style="left:438px;top:150px;width:1px;height:801px;background:#a8a8a8;"></div>
<div class="r" style="left:419px;top:173px;width:19px;height:2px;background:#a8a8a8;"></div>
<div class="r" style="left:419px;top:198px;width:19px;height:1px;background:#a8a8a8;"></div>
<div class="r" style="left:419px;top:222px;width:19px;height:1px;background:#a8a8a8;"></div>
<div class="r" style="left:419px;top:246px;width:19px;height:1px;background:#a8a8a8;"></div>
<div class="r" style="left:419px;top:270px;width:19px;height:1px;background:#a8a8a8;"></div>
<div class="r" style="left:419px;top:294px;width:19px;height:1px;background:#a8a8a8;"></div>
<div class="r" style="left:419px;top:318px;width:19px;height:1px;background:#a8a8a8;"></div>
<div class="r" style="left:419px;top:342px;width:19px;height:1px;background:#a8a8a8;"></div>
<div class="r" style="left:419px;top:366px;width:19px;height:1px;background:#a8a8a8;"></div>
<div class="r" style="left:419px;top:390px;width:19px;height:1px;background:#a8a8a8;"></div>
<div class="r" style="left:419px;top:414px;width:19px;height:1px;background:#a8a8a8;"></div>
<div class="r" style="left:419px;top:438px;width:19px;height:1px;background:#a8a8a8;"></div>
<div class="r" style="left:419px;top:462px;width:19px;height:1px;background:#a8a8a8;"></div>
<div class="r" style="left:419px;top:486px;width:19px;height:1px;background:#a8a8a8;"></div>
<div class="r" style="left:419px;top:510px;width:19px;height:1px;background:#a8a8a8;"></div>
<div class="r" style="left:419px;top:534px;width:19px;height:1px;background:#a8a8a8;"></div>
<div class="r" style="left:419px;top:558px;width:19px;height:1px;background:#a8a8a8;"></div>
<div class="r" style="left:419px;top:582px;width:19px;height:1px;background:#a8a8a8;"></div>
<div class="r" style="left:419px;top:606px;width:19px;height:1px;background:#a8a8a8;"></div>
<div class="r" style="left:419px;top:630px;width:19px;height:1px;background:#a8a8a8;"></div>
<div class="r" style="left:419px;top:654px;width:19px;height:1px;background:#a8a8a8;"></div>
<div class="r" style="left:419px;top:678px;width:19px;height:1px;background:#a8a8a8;"></div>
<div class="r" style="left:419px;top:702px;width:19px;height:1px;background:#a8a8a8;"></div>
<div class="r" style="left:419px;top:726px;width:19px;height:1px;background:#a8a8a8;"></div>
<div class="r" style="left:419px;top:750px;width:19px;height:1px;background:#a8a8a8;"></div>
<div class="r" style="left:419px;top:774px;width:19px;height:1px;background:#a8a8a8;"></div>
<div class="r" style="left:419px;top:798px;width:19px;height:1px;background:#a8a8a8;"></div>
<div class="r" style="left:419px;top:822px;width:19px;height:1px;background:#a8a8a8;"></div>
<div class="r" style="left:419px;top:846px;width:19px;height:1px;background:#a8a8a8;"></div>
<div class="r" style="left:419px;top:870px;width:19px;height:1px;background:#a8a8a8;"></div>
<div class="r" style="left:419px;top:894px;width:19px;height:1px;background:#a8a8a8;"></div>
<div class="r" style="left:419px;top:918px;width:19px;height:1px;background:#a8a8a8;"></div>
<div class="r" style="left:419px;top:942px;width:19px;height:1px;background:#a8a8a8;"></div>
<div class="r" style="left:419px;top:173px;width:1472px;height:1px;background:#a0a0a0;"></div>
<div class="r" style="left:540px;top:150px;width:1px;height:23px;background:#a8a8a8;"></div>
<div class="r" style="left:624px;top:150px;width:1px;height:23px;background:#a8a8a8;"></div>
<div class="r" style="left:686px;top:150px;width:1px;height:23px;background:#a8a8a8;"></div>
<div class="r" style="left:751px;top:150px;width:1px;height:23px;background:#a8a8a8;"></div>
<div class="r" style="left:794px;top:150px;width:1px;height:23px;background:#a8a8a8;"></div>
<div class="r" style="left:902px;top:150px;width:1px;height:23px;background:#a8a8a8;"></div>
<div class="r" style="left:933px;top:150px;width:1px;height:23px;background:#a8a8a8;"></div>
<div class="r" style="left:1122px;top:150px;width:1px;height:23px;background:#a8a8a8;"></div>
<div class="r" style="left:1188px;top:150px;width:1px;height:23px;background:#a8a8a8;"></div>
<div class="r" style="left:1506px;top:150px;width:1px;height:23px;background:#a8a8a8;"></div>
<div class="r" style="left:1756px;top:150px;width:1px;height:23px;background:#a8a8a8;"></div>
<div class="r" style="left:1888px;top:150px;width:1px;height:23px;background:#a8a8a8;"></div>
<div class="t" style="top:153.5px;font-size:12.5px;line-height:17px;color:#000;font-weight:bold;left:440.5px;-webkit-text-stroke:0.5px #000;">1</div>
<svg class="r" style="left:449.5px;top:160.5px;" width="8" height="5" viewBox="0 0 8 5"><path d="M0 0h7.5l-3.75 4.5z" fill="#8aa0ad"/><path d="M1.8 0.9h3.9l-1.95 2.2z" fill="#b8c6ce"/></svg>
<div class="t" style="top:151.5px;font-size:13.9px;line-height:19px;color:#222;left:467px;">Best.Punkt</div>
<div class="t" style="top:151.5px;font-size:13.9px;line-height:19px;color:#222;left:282.20000000000005px;width:600px;text-align:center;">Vorschlag</div>
<div class="t" style="top:151.5px;font-size:13.9px;line-height:19px;color:#222;left:355.70000000000005px;width:600px;text-align:center;">Best.Nr.</div>
<div class="t" style="top:151.5px;font-size:13.9px;line-height:19px;color:#222;left:419px;width:600px;text-align:center;">Best.Typ</div>
<div class="t" style="top:151.5px;font-size:13.9px;line-height:19px;color:#222;left:473.4px;width:600px;text-align:center;">Kopf</div>
<div class="t" style="top:151.5px;font-size:13.9px;line-height:19px;color:#222;left:548px;width:600px;text-align:center;">Mg.</div>
<div class="t" style="top:151.5px;font-size:13.9px;line-height:19px;color:#222;left:617px;width:600px;text-align:center;">GE</div>
<div class="t" style="top:151.5px;font-size:13.9px;line-height:19px;color:#222;left:728px;width:600px;text-align:center;">Art.Nr.</div>
<div class="t" style="top:151.5px;font-size:13.9px;line-height:19px;color:#222;left:855.2px;width:600px;text-align:center;">Auftr.Nr.</div>
<div class="t" style="top:151.5px;font-size:13.9px;line-height:19px;color:#222;left:1046px;width:600px;text-align:center;">Art.Bez.1</div>
<div class="t" style="top:151.5px;font-size:13.9px;line-height:19px;color:#222;left:1330.7px;width:600px;text-align:center;">Art.Bez.2</div>
<div class="t" style="top:151.5px;font-size:13.9px;line-height:19px;color:#222;left:1521.5px;width:600px;text-align:center;">Art.Bez.3</div>
<div class="r" style="left:1892px;top:150px;width:16px;height:801px;background:#ebebeb;"></div>
<div class="r" style="left:1892px;top:239px;width:15px;height:65px;background:#c8c8c8;"></div>
<svg class="r" style="left:1894px;top:154px;" width="11" height="9" viewBox="0 0 11 9"><path d="M1.5 6.5l4-4 4 4" fill="none" stroke="#444" stroke-width="1.8"/></svg>
<svg class="r" style="left:1894px;top:938px;" width="11" height="9" viewBox="0 0 11 9"><path d="M1.5 2.5l4 4 4-4" fill="none" stroke="#444" stroke-width="1.8"/></svg>
<div class="r" style="left:419px;top:952px;width:1489px;height:16px;background:#ebebeb;"></div>
<div class="r" style="left:436px;top:952px;width:347px;height:15px;background:#c8c8c8;"></div>
<svg class="r" style="left:422px;top:955px;" width="9" height="10" viewBox="0 0 9 10"><path d="M6.5 1.5l-4 3.5 4 3.5" fill="none" stroke="#444" stroke-width="1.8"/></svg>
<svg class="r" style="left:1879px;top:955px;" width="9" height="10" viewBox="0 0 9 10"><path d="M2.5 1.5l4 3.5-4 3.5" fill="none" stroke="#444" stroke-width="1.8"/></svg>
<div class="r" style="left:418px;top:977px;width:100px;height:30px;background:#fefefe;border:1px solid #adadad;box-sizing:border-box;"></div>
<div class="t" style="top:983.0px;font-size:13.4px;line-height:18px;color:#222;left:168px;width:600px;text-align:center;">Bestellen</div>
<div class="r" style="left:524px;top:977px;width:100px;height:30px;background:#fefefe;border:1px solid #adadad;box-sizing:border-box;"></div>
<div class="t" style="top:983.0px;font-size:13.4px;line-height:18px;color:#222;left:274px;width:600px;text-align:center;">Löschen</div>
<div class="r" style="left:630px;top:977px;width:100px;height:30px;background:#fefefe;border:1px solid #adadad;box-sizing:border-box;"></div>
<div class="t" style="top:983.0px;font-size:13.4px;line-height:18px;color:#222;left:380px;width:600px;text-align:center;">Alle</div>
<svg class="r" style="left:1781px;top:982px;" width="20" height="20" viewBox="0 0 20 20"><circle cx="7" cy="8.2" r="3.2" fill="none" stroke="#e36a1c" stroke-width="1.1"/><path d="M2 18c0-3.6 2.3-6.3 5-6.3s5 2.7 5 6.3" fill="none" stroke="#e36a1c" stroke-width="1.1"/><path d="M8.6 4.3a3.2 3.2 0 1 1 3.6 4.7M12.2 9c2.5.8 4.8 3.3 5 6.8" fill="none" stroke="#e36a1c" stroke-width="1.1"/></svg>
<svg class="r" style="left:1817px;top:982px;" width="20" height="20" viewBox="0 0 20 20"><path d="M2.5 6h12v12h-12z M2.5 6l3.2-3.7h12L14.5 6 M14.5 18l3.2-3.3V2.3" fill="none" stroke="#27a8df" stroke-width="1.1" stroke-linejoin="round"/><path d="M7.3 6V9.5h2V6l3.2-3.7M8.7 2.3L7.3 6" fill="none" stroke="#27a8df" stroke-width="0.9"/><path d="M4.8 14v2.5M6.8 14v1.5M8.3 14v2.5" stroke="#27a8df" stroke-width="0.9"/></svg>
<svg class="r" style="left:1854px;top:982px;" width="20" height="20" viewBox="0 0 20 20"><rect x="2.7" y="2.4" width="13.3" height="15" fill="none" stroke="#6b4a10" stroke-width="1.1"/><path d="M5 5h9M5 7.6h4.5M5 9.6h4.5M5 11.6h4.5" stroke="#6b4a10" stroke-width="0.9"/><path d="M5 5h9" stroke="#f0a81c" stroke-width="1.3"/><path d="M11 7.6h3M11 9.6h3M11 11.6h3M9.8 14.5h4.2" stroke="#f0a81c" stroke-width="0.9"/></svg>
<svg class="r" style="left:1888px;top:982px;" width="20" height="20" viewBox="0 0 20 20"><circle cx="10.4" cy="9.5" r="7.5" fill="none" stroke="#22dd22" stroke-width="1.1"/><path d="M10.4 8v5.6" stroke="#22dd22" stroke-width="1.5"/><circle cx="10.4" cy="5.7" r="0.9" fill="#22dd22"/></svg>
<div class="r" style="left:0px;top:1017px;width:1920px;height:22px;background:#619bd2;"></div>
<div class="t" style="top:1021.1px;font-size:12.72px;line-height:17px;color:#fff;left:3px;">Einkauf Status: Bestellvorschläge, aktuelle Woche: 39, ohne Einschränkung.</div>
</body></html>
